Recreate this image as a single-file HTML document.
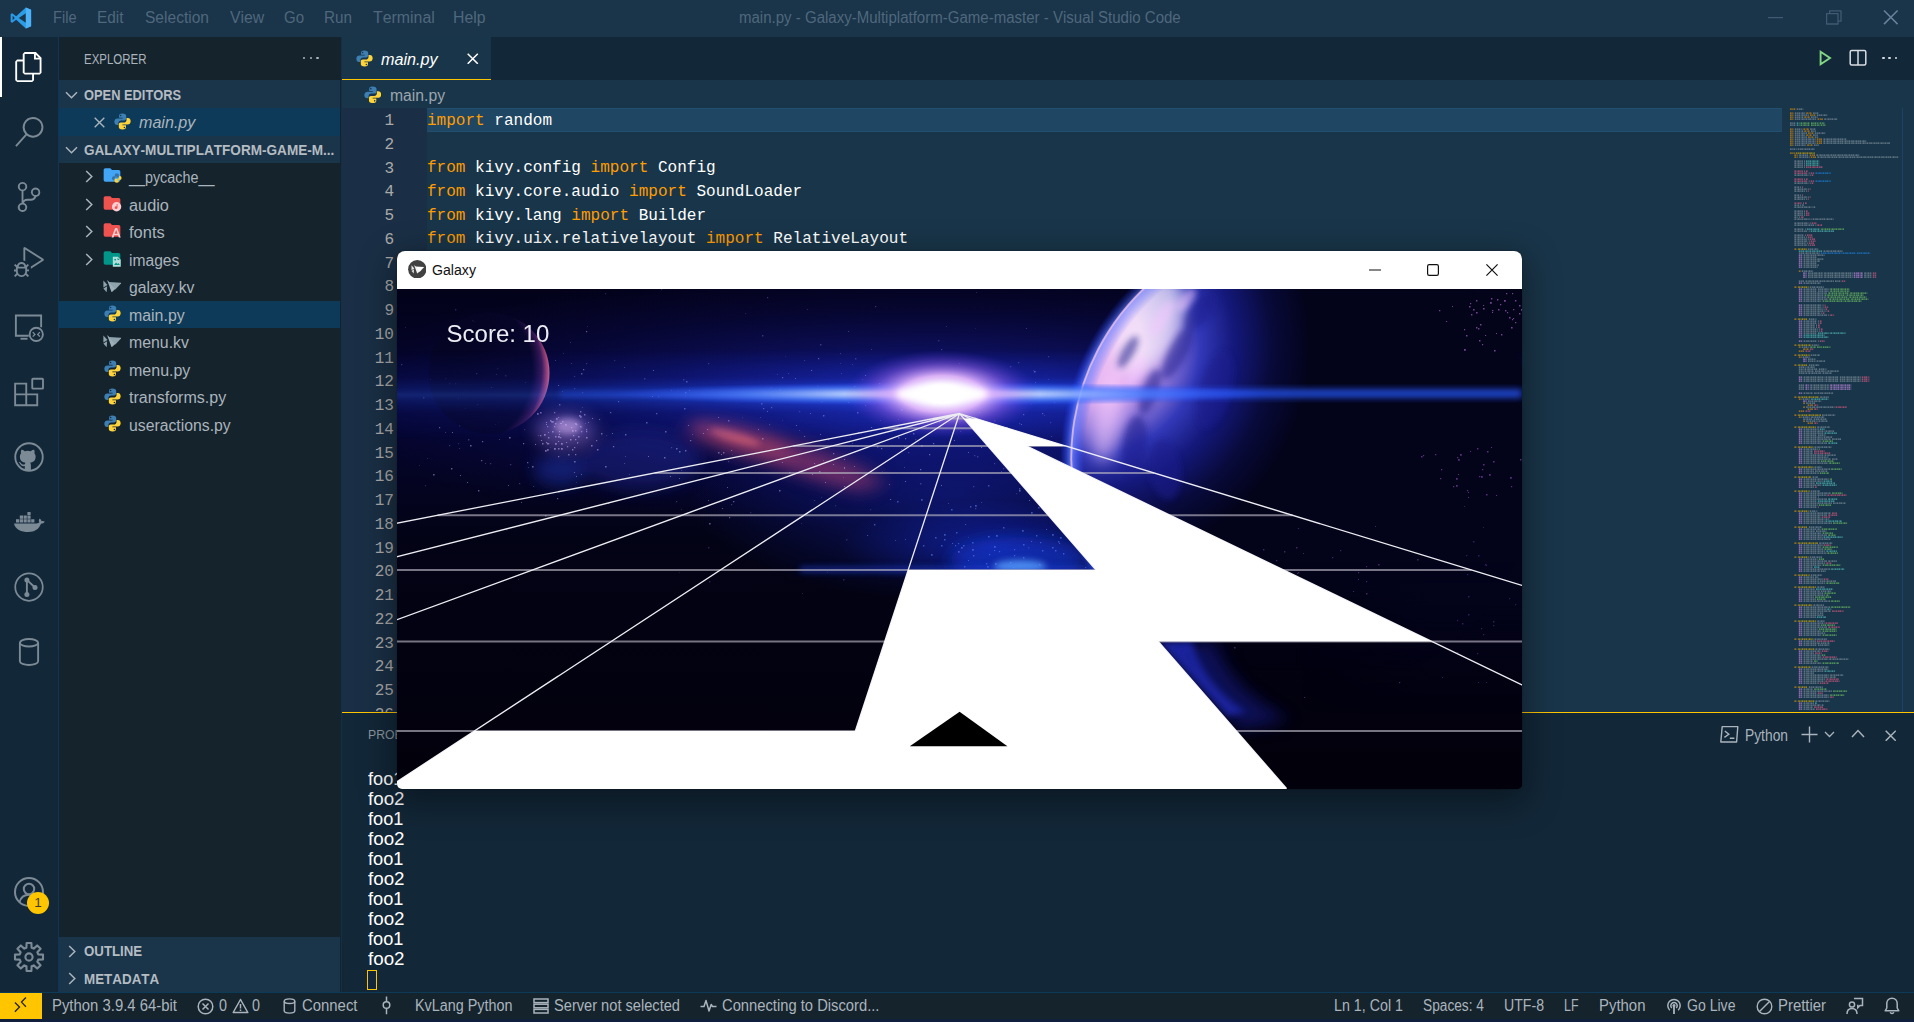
<!DOCTYPE html><html><head><meta charset="utf-8"><title>main.py - Galaxy-Multiplatform-Game-master - Visual Studio Code</title><style>
.tx{position:absolute;white-space:nowrap;transform-origin:0 50%;font-kerning:none;display:block}
*{box-sizing:border-box;margin:0;padding:0}
html,body{width:1914px;height:1022px;overflow:hidden;background:#193549}
body{position:relative;font-family:"Liberation Sans",sans-serif;color:#fff;font-size:16px}
.abs{position:absolute}
#titlebar{left:0;top:0;width:1914px;height:37px;background:#1a344a}
#activity{left:0;top:37px;width:59px;height:955px;background:#122738;border-right:1px solid #0e3655}
#sidebar{left:59px;top:37px;width:281.700px;height:955px;background:#15232d}
#sbborder{left:340.700px;top:37px;width:1.300px;height:955px;background:#143049}
#tabs{left:342px;top:37px;width:1572px;height:43px;background:#122738}
#tab{left:342px;top:37px;width:149px;height:43px;background:#193549;border-bottom:1.300px solid #ffc600}
#crumbs{left:342px;top:80px;width:1572px;height:28px;background:#193549}
#editor{left:342px;top:108px;width:1572px;height:604px;background:#193549;overflow:hidden}
#gutter{left:0;top:0;width:85px;height:604px;background:#1a2f45}
#panel{left:342px;top:712px;width:1572px;height:280px;background:#122738;border-top:1.400px solid #ffc600}
#status{left:0;top:992px;width:1914px;height:30px;background:#15232d;border-top:1px solid #0d3a58;color:#aab2b9;font-size:16.4px}
.st{position:absolute;top:0;height:28px;line-height:26px;white-space:nowrap}
.code{font-family:"Liberation Mono",monospace;font-size:16.04px;white-space:pre;position:absolute;left:85px;margin-top:.700px;height:24px;line-height:24px;color:#fff}
.ln{font-family:"Liberation Mono",monospace;font-size:16.04px;position:absolute;left:0;width:52px;margin-top:1.200px;text-align:right;height:24px;line-height:24px;color:#aaa}
.k{color:#ff9d00}
.row{position:absolute;left:0;width:281px;height:27.5px;line-height:26px;font-size:16.4px;color:#aab4bc;white-space:nowrap}
.hdr{position:absolute;left:0;width:281px;height:27.5px;line-height:27px;font-size:13.8px;font-weight:bold;color:#aeb8c0;background:#1a344a;white-space:nowrap}
</style></head><body>
<div id="titlebar" class="abs"><svg class="abs" style="left:10px;top:7px" width="22" height="22" viewBox="0 0 100 100"><path d="M72 2 L96 13 V87 L72 98 L28 58 L10 72 L3 68 V32 L10 28 L28 42 Z M72 28 L40 50 L72 72 Z M12 40 V60 L22 50 Z" fill="#2b9be6" fill-rule="evenodd"/><path d="M72 2 L96 13 V87 L72 98 Z" fill="#4db2f7"/></svg><span class="tx" style="left:53px;top:6.4px;height:24px;line-height:24px;font-size:15.8px;color:#4f687c;transform:scaleX(0.9230);">File</span><span class="tx" style="left:97px;top:6.4px;height:24px;line-height:24px;font-size:15.8px;color:#4f687c;transform:scaleX(0.9733);">Edit</span><span class="tx" style="left:144.5px;top:6.4px;height:24px;line-height:24px;font-size:15.8px;color:#4f687c;transform:scaleX(0.9846);">Selection</span><span class="tx" style="left:229.5px;top:6.4px;height:24px;line-height:24px;font-size:15.8px;color:#4f687c;transform:scaleX(1.0011);">View</span><span class="tx" style="left:283.5px;top:6.4px;height:24px;line-height:24px;font-size:15.8px;color:#4f687c;transform:scaleX(0.9489);">Go</span><span class="tx" style="left:324px;top:6.4px;height:24px;line-height:24px;font-size:15.8px;color:#4f687c;transform:scaleX(0.9660);">Run</span><span class="tx" style="left:372.5px;top:6.4px;height:24px;line-height:24px;font-size:15.8px;color:#4f687c;transform:scaleX(1.0049);">Terminal</span><span class="tx" style="left:452.5px;top:6.4px;height:24px;line-height:24px;font-size:15.8px;color:#4f687c;transform:scaleX(1.0001);">Help</span><span class="tx" style="left:738.5px;top:5.6px;height:24px;line-height:24px;font-size:15.8px;color:#4f687c;transform:scaleX(0.9511);">main.py - Galaxy-Multiplatform-Game-master - Visual Studio Code</span><svg class="abs" style="left:1760px;top:6px" width="150" height="24" viewBox="1760 6 150 24"><g fill="none" stroke-width="1.300"><path d="M1768 17.600h15" stroke="#3f5a72"/><path d="M1826.600 13.600h11.400v10.400h-11.400zM1829.600 13.600v-2.800h11.400v10.400h-3" stroke="#3f5a72" stroke-linejoin="round"/><path d="M1884 10.500l13.600 13.600M1897.600 10.500L1884 24.100" stroke="#67829a" stroke-width="1.500"/></g></svg></div>
<div id="activity" class="abs"><div class="abs" style="left:0;top:0;width:2px;height:60px;background:#fff"></div><svg class="abs" style="left:14px;top:15px" width="30" height="30" viewBox="0 0 24 24" ><path fill="#fff" d="M17.5 0h-9L7 1.5V6H2.5L1 7.5v15.07L2.5 24h12.07L16 22.57V18h4.7l1.3-1.43V4.5L17.5 0zm0 2.12l2.38 2.38H17.5V2.12zm-3 20.38h-12v-15H7v9.07L8.5 18h6v4.5zm6-6h-12v-15H16V6h4.5v10.5z"/></svg><svg class="abs" style="left:14px;top:80px" width="30" height="30" viewBox="0 0 24 24" ><path fill="#7c8a96" d="M15.25 0a8.25 8.25 0 0 0-6.18 13.72L1 22.88l1.12 1 8.05-9.12A8.251 8.251 0 1 0 15.25.01V0zm0 15a6.75 6.75 0 1 1 0-13.5 6.75 6.75 0 0 1 0 13.5z"/></svg><svg class="abs" style="left:14px;top:145px" width="30" height="30" viewBox="0 0 24 24" ><path fill="#7c8a96" d="M21.007 8.222A3.738 3.738 0 0 0 15.045 5.2a3.737 3.737 0 0 0 1.156 6.583 2.988 2.988 0 0 1-2.668 1.67h-2.99a4.456 4.456 0 0 0-2.989 1.165V7.4a3.737 3.737 0 1 0-1.494 0v9.117a3.776 3.776 0 1 0 1.816.099 2.99 2.99 0 0 1 2.668-1.667h2.99a4.484 4.484 0 0 0 4.223-3.039 3.736 3.736 0 0 0 3.25-3.687zM4.565 3.738a2.242 2.242 0 1 1 4.484 0 2.242 2.242 0 0 1-4.484 0zm4.484 16.441a2.242 2.242 0 1 1-4.484 0 2.242 2.242 0 0 1 4.484 0zm8.221-9.715a2.242 2.242 0 1 1 0-4.485 2.242 2.242 0 0 1 0 4.485z"/></svg><svg class="abs" style="left:14px;top:210px" width="30" height="30" viewBox="0 0 24 24" ><path fill="#7c8a96" d="M10.94 13.5l-1.32 1.32a3.73 3.73 0 0 0-7.24 0L1.06 13.5 0 14.56l1.72 1.72-.22.22V18H0v1.5h1.5v.08c.077.489.214.966.41 1.42L0 22.94 1.06 24l1.65-1.65A4.308 4.308 0 0 0 6 24a4.31 4.31 0 0 0 3.29-1.65L10.94 24 12 22.94 10.09 21c.198-.464.336-.951.41-1.45v-.1H12V18h-1.5v-1.5l-.22-.22L12 14.56l-1.06-1.06zM6 13.5a2.25 2.25 0 0 1 2.25 2.25h-4.5A2.25 2.25 0 0 1 6 13.5zm3 6a3.33 3.33 0 0 1-3 3 3.33 3.33 0 0 1-3-3v-2.25h6v2.25zm14.76-9.9v1.26L13.5 17.37V15.6l8.5-5.37L9 2v9.46a5.07 5.07 0 0 0-1.5-.72V.63L8.64 0l15.12 9.6z"/></svg><svg class="abs" style="left:14px;top:275px" width="30" height="30" viewBox="0 0 24 24" ><g fill="none" stroke="#7c8a96" stroke-width="1.5"><path d="M11.800 19H1.500V2.800h20.200v9.400"/><path d="M5.200 21.400h5.600"/><circle cx="17.800" cy="17.900" r="5.300"/><path d="M15 16.100l1.700 1.800-1.700 1.800M20.700 16.100l-1.700 1.800 1.700 1.800" stroke-width="1.150"/></g></svg><svg class="abs" style="left:14px;top:340px" width="30" height="30" viewBox="0 0 24 24" ><g fill="none" stroke="#7c8a96" stroke-width="1.5"><path d="M0.900 5.300h8.900v8.600h8.800v8.700H0.900zM0.900 13.900h8.900v8.700"/><rect x="14.600" y="1.400" width="8.600" height="7.900" rx="0.600"/></g></svg><svg class="abs" style="left:14px;top:405px" width="30" height="30" viewBox="0 0 24 24" ><circle cx="12" cy="12" r="11" fill="none" stroke="#7c8a96" stroke-width="1.5"/><path fill="#7c8a96" d="M8.6 22.3v-3.1c-2.6.6-3.4-1.2-3.4-1.2-.5-1.1-1.1-1.4-1.1-1.4-.9-.6.1-.6.1-.6 1 .1 1.5 1 1.5 1 .9 1.5 2.3 1.1 2.9.8.1-.6.3-1.1.6-1.3-2.2-.2-4.500-1.100-4.500-4.900 0-1.100.400-2 1-2.700-.1-.2-.4-1.200.1-2.600 0 0 .8-.3 2.700 1a9.400 9.400 0 0 1 5 0c1.900-1.300 2.700-1 2.700-1 .5 1.400.2 2.400.1 2.600.6.700 1 1.600 1 2.700 0 3.800-2.300 4.700-4.500 4.900.4.300.7.900.7 1.800v4z"/></svg><svg class="abs" style="left:13px;top:473px" width="32" height="30" viewBox="0 0 32 30" ><g fill="#7c8a96"><path d="M1 13.5h22.500c1.200 0 2.300-.5 2.900-1.200-.8-1.100-.8-2.900.3-3.900 1.100.9 1.700 1.800 1.800 2.800 1.100-.4 2.300-.2 3.200.4-.6 1.500-2 2.200-3.700 2.200-1.900 5.200-6.300 8.200-12.500 8.200-7.200 0-13.500-2.500-14.500-8.500z"/><path d="M3 9.300h3.200v3.200H3zM6.800 9.300H10v3.200H6.800zM10.600 9.300h3.200v3.200h-3.200zM14.400 9.300h3.200v3.200h-3.200zM18.200 9.300h3.200v3.200h-3.200zM6.800 5.600H10v3.200H6.800zM10.600 5.600h3.200v3.200h-3.200zM14.400 5.600h3.200v3.200h-3.200zM14.400 1.900h3.200v3.200h-3.200z"/></g></svg><svg class="abs" style="left:14px;top:535px" width="30" height="30" viewBox="0 0 24 24" ><circle cx="12" cy="12" r="11" fill="none" stroke="#7c8a96" stroke-width="1.4"/><g fill="#7c8a96"><circle cx="10.3" cy="6.300" r="2"/><circle cx="10.3" cy="18" r="2"/><circle cx="16.8" cy="12.400" r="2"/></g><path d="M10.3 6.300V18M10.3 6.300l6.500 6.100" stroke="#7c8a96" stroke-width="1.5" fill="none"/></svg><svg class="abs" style="left:14px;top:600px" width="30" height="30" viewBox="0 0 24 24" ><g fill="none" stroke="#7c8a96" stroke-width="1.5"><ellipse cx="12" cy="4.600" rx="7.300" ry="3"/><path d="M4.700 4.600v14.800c0 1.700 3.300 3 7.300 3s7.300-1.300 7.300-3V4.600"/></g></svg><svg class="abs" style="left:13px;top:839px" width="32" height="32" viewBox="0 0 32 32" ><g fill="none" stroke="#7c8a96" stroke-width="2"><circle cx="16" cy="16" r="14"/><circle cx="16" cy="13" r="5.200"/><path d="M6.500 26.200c1.200-4.800 5-7.500 9.500-7.500s8.300 2.700 9.500 7.500"/></g></svg><div class="abs" style="left:27px;top:855px;width:22px;height:22px;border-radius:11px;background:#ffc600;color:#3a3a2a;font-size:13.5px;line-height:22px;text-align:center">1</div><svg class="abs" style="left:13px;top:904px" width="32" height="32" viewBox="0 0 32 32" ><path d="M13.41 6.75L13.60 2.00L18.40 2.00L18.59 6.75L20.71 7.63L24.20 4.41L27.59 7.80L24.37 11.29L25.25 13.41L30.00 13.60L30.00 18.40L25.25 18.59L24.37 20.71L27.59 24.20L24.20 27.59L20.71 24.37L18.59 25.25L18.40 30.00L13.60 30.00L13.41 25.25L11.29 24.37L7.80 27.59L4.41 24.20L7.63 20.71L6.75 18.59L2.00 18.40L2.00 13.60L6.75 13.41L7.63 11.29L4.41 7.80L7.80 4.41L11.29 7.63Z" fill="none" stroke="#7c8a96" stroke-width="2.1" stroke-linejoin="round"/><circle cx="16" cy="16" r="3.600" fill="none" stroke="#7c8a96" stroke-width="2.1"/></svg></div>
<div id="sidebar" class="abs"></div><div id="sbborder" class="abs"></div><span class="tx" style="left:84.3px;top:48.8px;height:21px;line-height:21px;font-size:14px;color:#aab4bc;transform:scaleX(0.8197);">EXPLORER</span><div class="abs" style="left:303px;top:57px;width:17px;height:4px"><i class="abs" style="left:0.0px;top:0;width:2.400px;height:2.400px;background:#aab4bc;border-radius:1px"></i><i class="abs" style="left:6.6px;top:0;width:2.400px;height:2.400px;background:#aab4bc;border-radius:1px"></i><i class="abs" style="left:13.2px;top:0;width:2.400px;height:2.400px;background:#aab4bc;border-radius:1px"></i></div><div class="abs" style="left:59px;top:79.600px;width:281px;height:28.400px;background:#1a344a"></div><svg class="abs" style="left:65px;top:91px" width="13" height="8" viewBox="0 0 13 8" ><path d="M1 1.200l5.500 5.600L12 1.200" fill="none" stroke="#aab4bc" stroke-width="1.500"/></svg><span class="tx" style="left:84.3px;top:84.7px;height:21px;line-height:21px;font-size:13.8px;color:#b4bcc2;font-weight:bold;transform:scaleX(0.9314);">OPEN EDITORS</span><div class="abs" style="left:59px;top:108px;width:281px;height:27.500px;background:#0d3a58"></div><svg class="abs" style="left:93.5px;top:117px" width="11" height="11" viewBox="0 0 11 11" ><path d="M0.700 0.700L10.3 10.3M10.3 0.700L0.700 10.3" stroke="#aab4bc" stroke-width="1.4" fill="none"/></svg><svg class="abs" style="left:113.5px;top:112.5px" width="17" height="17" viewBox="0.4 0.4 15.2 15.2" ><path d="M7.9 0.800C5.300 0.800 4.900 1.900 4.900 3V4.700H8.100V5.300H3.500C1.800 5.300 0.700 6.400 0.700 8.200C0.700 10 1.700 11.100 3.200 11.100H4.400V9.300C4.400 7.900 5.400 7 6.800 7H9.600C10.600 7 11.300 6.300 11.300 5.300V3C11.300 1.700 10.300 0.800 7.900 0.800Z" fill="#3d7eb3"/><circle cx="6.300" cy="2.700" r="0.700" fill="#0d3a58"/><g transform="rotate(180 8 8)"><path d="M7.9 0.800C5.300 0.800 4.900 1.900 4.900 3V4.700H8.100V5.300H3.500C1.800 5.300 0.700 6.400 0.700 8.200C0.700 10 1.700 11.100 3.200 11.100H4.400V9.300C4.400 7.900 5.400 7 6.800 7H9.600C10.600 7 11.300 6.300 11.300 5.300V3C11.300 1.700 10.300 0.800 7.900 0.800Z" fill="#ffd43b"/><circle cx="6.300" cy="2.700" r="0.700" fill="#0d3a58"/></g></svg><span class="tx" style="left:139.4px;top:111.3px;height:23px;line-height:23px;font-size:15.6px;color:#aab4bc;font-style:italic;transform:scaleX(1.0325);">main.py</span><div class="abs" style="left:59px;top:135.500px;width:281px;height:27.500px;background:#1a344a"></div><svg class="abs" style="left:65px;top:146px" width="13" height="8" viewBox="0 0 13 8" ><path d="M1 1.200l5.500 5.600L12 1.200" fill="none" stroke="#aab4bc" stroke-width="1.500"/></svg><span class="tx" style="left:84.3px;top:140.1px;height:21px;line-height:21px;font-size:13.8px;color:#b4bcc2;font-weight:bold;transform:scaleX(0.9841);">GALAXY-MULTIPLATFORM-GAME-M...</span><svg class="abs" style="left:85px;top:170.1px" width="8" height="13" viewBox="0 0 8 13" ><path d="M1.200 1l5.600 5.500L1.200 12" fill="none" stroke="#aab4bc" stroke-width="1.500"/></svg><svg class="abs" style="left:101.6px;top:165.29999999999998px" width="20" height="20" viewBox="0 0 24 24" ><path d="M10 4H4c-1.110 0-2 .890-2 2v12a2 2 0 0 0 2 2h16a2 2 0 0 0 2-2V8c0-1.110-.900-2-2-2h-8l-2-2z" fill="#42a5f5"/><g transform="translate(11.500 9.500) scale(0.780)"><path d="M7.9 0.800C5.300 0.800 4.900 1.900 4.900 3V4.700H8.100V5.300H3.500C1.800 5.300 0.700 6.400 0.700 8.200C0.700 10 1.700 11.100 3.200 11.100H4.400V9.300C4.400 7.900 5.400 7 6.800 7H9.600C10.600 7 11.300 6.300 11.300 5.300V3C11.300 1.700 10.300 0.800 7.900 0.800Z" fill="#3572a5"/><g transform="rotate(180 8 8)"><path d="M7.9 0.800C5.300 0.800 4.900 1.900 4.900 3V4.700H8.100V5.300H3.500C1.800 5.300 0.700 6.400 0.700 8.200C0.700 10 1.700 11.100 3.200 11.100H4.400V9.300C4.400 7.900 5.400 7 6.800 7H9.600C10.600 7 11.300 6.300 11.300 5.300V3C11.300 1.700 10.300 0.800 7.900 0.800Z" fill="#ffd43b"/></g></g></svg><span class="tx" style="left:129.4px;top:166.1px;height:23px;line-height:23px;font-size:15.6px;color:#aab4bc;transform:scaleX(0.9202);">__pycache__</span><svg class="abs" style="left:85px;top:197.6px" width="8" height="13" viewBox="0 0 8 13" ><path d="M1.200 1l5.600 5.500L1.200 12" fill="none" stroke="#aab4bc" stroke-width="1.500"/></svg><svg class="abs" style="left:101.6px;top:192.79999999999998px" width="20" height="20" viewBox="0 0 24 24" ><path d="M10 4H4c-1.110 0-2 .890-2 2v12a2 2 0 0 0 2 2h16a2 2 0 0 0 2-2V8c0-1.110-.900-2-2-2h-8l-2-2z" fill="#ef5350"/><circle cx="17.500" cy="16.500" r="5.600" fill="#ffcdd2"/><path d="M18.600 13.300v4.200a1.700 1.700 0 1 1-1-1.500v-2.700z" fill="#ef5350"/></svg><span class="tx" style="left:129.4px;top:193.6px;height:23px;line-height:23px;font-size:15.6px;color:#aab4bc;transform:scaleX(1.0453);">audio</span><svg class="abs" style="left:85px;top:225.1px" width="8" height="13" viewBox="0 0 8 13" ><path d="M1.200 1l5.600 5.500L1.200 12" fill="none" stroke="#aab4bc" stroke-width="1.500"/></svg><svg class="abs" style="left:101.6px;top:220.29999999999998px" width="20" height="20" viewBox="0 0 24 24" ><path d="M10 4H4c-1.110 0-2 .890-2 2v12a2 2 0 0 0 2 2h16a2 2 0 0 0 2-2V8c0-1.110-.900-2-2-2h-8l-2-2z" fill="#ef5350"/><path d="M15.800 9.500h2.400l4.300 11.500h-2.300l-.900-2.600h-4.600l-.900 2.600h-2.300zM15.300 16.600h3.400l-1.700-4.900z" fill="#ffcdd2"/></svg><span class="tx" style="left:129.4px;top:221.1px;height:23px;line-height:23px;font-size:15.6px;color:#aab4bc;transform:scaleX(1.0556);">fonts</span><svg class="abs" style="left:85px;top:252.60000000000002px" width="8" height="13" viewBox="0 0 8 13" ><path d="M1.200 1l5.600 5.500L1.200 12" fill="none" stroke="#aab4bc" stroke-width="1.500"/></svg><svg class="abs" style="left:101.6px;top:247.8px" width="20" height="20" viewBox="0 0 24 24" ><path d="M10 4H4c-1.110 0-2 .890-2 2v12a2 2 0 0 0 2 2h16a2 2 0 0 0 2-2V8c0-1.110-.900-2-2-2h-8l-2-2z" fill="#009688"/><path d="M13 10.500h6l3.500 3.500v8.500H13z" fill="#b2dfdb"/><path d="M14.500 20.500l2.300-3.200 1.600 2 1.200-1.400 1.900 2.600zM18.700 11.800v2.600h2.600z" fill="#009688"/><circle cx="15.800" cy="14" r="1" fill="#009688"/></svg><span class="tx" style="left:129.4px;top:248.6px;height:23px;line-height:23px;font-size:15.6px;color:#aab4bc;transform:scaleX(1.0022);">images</span><svg class="abs" style="left:102.6px;top:279.6px" width="18.5" height="12.3" viewBox="0 0 18.5 12.3" ><polygon points="0.4,0.4 4.5,5 0.4,7.4" fill="#8fa3ad"/><polygon points="0.4,8.6 3.7,12.3 4.1,6.2" fill="#8fa3ad"/><polygon points="4.1,0 8.6,12.3 13.2,8.2" fill="#9db0b9"/><polygon points="5.8,2.1 18.5,2.9 12.3,9.5" fill="#8fa3ad"/></svg><span class="tx" style="left:129.4px;top:276.1px;height:23px;line-height:23px;font-size:15.6px;color:#aab4bc;transform:scaleX(1.0067);">galaxy.kv</span><div class="abs" style="left:59px;top:300.5px;width:281px;height:27.500px;background:#0d3a58"></div><svg class="abs" style="left:104px;top:305.1px" width="17" height="17" viewBox="0.4 0.4 15.2 15.2" ><path d="M7.9 0.800C5.300 0.800 4.900 1.900 4.900 3V4.700H8.100V5.300H3.500C1.800 5.300 0.700 6.400 0.700 8.200C0.700 10 1.700 11.100 3.200 11.100H4.400V9.300C4.400 7.900 5.400 7 6.800 7H9.600C10.600 7 11.300 6.300 11.300 5.300V3C11.300 1.700 10.300 0.800 7.900 0.800Z" fill="#3d7eb3"/><circle cx="6.300" cy="2.700" r="0.700" fill="#0d3a58"/><g transform="rotate(180 8 8)"><path d="M7.9 0.800C5.300 0.800 4.900 1.900 4.900 3V4.700H8.100V5.300H3.500C1.800 5.300 0.700 6.400 0.700 8.200C0.700 10 1.700 11.100 3.200 11.100H4.400V9.300C4.400 7.900 5.400 7 6.800 7H9.600C10.600 7 11.300 6.300 11.300 5.300V3C11.300 1.700 10.300 0.800 7.900 0.800Z" fill="#ffd43b"/><circle cx="6.300" cy="2.700" r="0.700" fill="#0d3a58"/></g></svg><span class="tx" style="left:129.4px;top:303.6px;height:23px;line-height:23px;font-size:15.6px;color:#aab4bc;transform:scaleX(1.0197);">main.py</span><svg class="abs" style="left:102.6px;top:334.6px" width="18.5" height="12.3" viewBox="0 0 18.5 12.3" ><polygon points="0.4,0.4 4.5,5 0.4,7.4" fill="#8fa3ad"/><polygon points="0.4,8.6 3.7,12.3 4.1,6.2" fill="#8fa3ad"/><polygon points="4.1,0 8.6,12.3 13.2,8.2" fill="#9db0b9"/><polygon points="5.8,2.1 18.5,2.9 12.3,9.5" fill="#8fa3ad"/></svg><span class="tx" style="left:129.4px;top:331.1px;height:23px;line-height:23px;font-size:15.6px;color:#aab4bc;transform:scaleX(1.0160);">menu.kv</span><svg class="abs" style="left:104px;top:360.1px" width="17" height="17" viewBox="0.4 0.4 15.2 15.2" ><path d="M7.9 0.800C5.300 0.800 4.900 1.900 4.900 3V4.700H8.100V5.300H3.500C1.800 5.300 0.700 6.400 0.700 8.200C0.700 10 1.700 11.100 3.200 11.100H4.400V9.300C4.400 7.900 5.400 7 6.800 7H9.600C10.600 7 11.300 6.300 11.300 5.300V3C11.300 1.700 10.300 0.800 7.900 0.800Z" fill="#3d7eb3"/><circle cx="6.300" cy="2.700" r="0.700" fill="#15232d"/><g transform="rotate(180 8 8)"><path d="M7.9 0.800C5.300 0.800 4.900 1.900 4.900 3V4.700H8.100V5.300H3.500C1.800 5.300 0.700 6.400 0.700 8.200C0.700 10 1.700 11.100 3.200 11.100H4.400V9.300C4.400 7.900 5.400 7 6.800 7H9.600C10.600 7 11.300 6.300 11.300 5.300V3C11.300 1.700 10.300 0.800 7.900 0.800Z" fill="#ffd43b"/><circle cx="6.300" cy="2.700" r="0.700" fill="#15232d"/></g></svg><span class="tx" style="left:129.4px;top:358.6px;height:23px;line-height:23px;font-size:15.6px;color:#aab4bc;transform:scaleX(1.0262);">menu.py</span><svg class="abs" style="left:104px;top:387.6px" width="17" height="17" viewBox="0.4 0.4 15.2 15.2" ><path d="M7.9 0.800C5.300 0.800 4.900 1.900 4.900 3V4.700H8.100V5.300H3.500C1.800 5.300 0.700 6.400 0.700 8.200C0.700 10 1.700 11.100 3.200 11.100H4.400V9.300C4.400 7.900 5.400 7 6.800 7H9.600C10.600 7 11.300 6.300 11.300 5.300V3C11.300 1.700 10.300 0.800 7.900 0.800Z" fill="#3d7eb3"/><circle cx="6.300" cy="2.700" r="0.700" fill="#15232d"/><g transform="rotate(180 8 8)"><path d="M7.9 0.800C5.300 0.800 4.900 1.900 4.900 3V4.700H8.100V5.300H3.500C1.800 5.300 0.700 6.400 0.700 8.200C0.700 10 1.700 11.100 3.200 11.100H4.400V9.300C4.400 7.900 5.400 7 6.800 7H9.600C10.600 7 11.300 6.300 11.300 5.300V3C11.300 1.700 10.300 0.800 7.900 0.800Z" fill="#ffd43b"/><circle cx="6.300" cy="2.700" r="0.700" fill="#15232d"/></g></svg><span class="tx" style="left:129.4px;top:386.1px;height:23px;line-height:23px;font-size:15.6px;color:#aab4bc;transform:scaleX(1.0297);">transforms.py</span><svg class="abs" style="left:104px;top:415.1px" width="17" height="17" viewBox="0.4 0.4 15.2 15.2" ><path d="M7.9 0.800C5.300 0.800 4.900 1.900 4.900 3V4.700H8.100V5.300H3.500C1.800 5.300 0.700 6.400 0.700 8.200C0.700 10 1.700 11.100 3.200 11.100H4.400V9.300C4.400 7.900 5.400 7 6.800 7H9.600C10.600 7 11.300 6.300 11.300 5.300V3C11.300 1.700 10.300 0.800 7.900 0.800Z" fill="#3d7eb3"/><circle cx="6.300" cy="2.700" r="0.700" fill="#15232d"/><g transform="rotate(180 8 8)"><path d="M7.9 0.800C5.300 0.800 4.900 1.900 4.900 3V4.700H8.100V5.300H3.500C1.800 5.300 0.700 6.400 0.700 8.200C0.700 10 1.700 11.100 3.200 11.100H4.400V9.300C4.400 7.900 5.400 7 6.800 7H9.600C10.600 7 11.300 6.300 11.300 5.300V3C11.300 1.700 10.300 0.800 7.900 0.800Z" fill="#ffd43b"/><circle cx="6.300" cy="2.700" r="0.700" fill="#15232d"/></g></svg><span class="tx" style="left:129.4px;top:413.6px;height:23px;line-height:23px;font-size:15.6px;color:#aab4bc;transform:scaleX(1.0111);">useractions.py</span><div class="abs" style="left:59px;top:937px;width:281px;height:27.500px;background:#1a344a"></div><svg class="abs" style="left:68px;top:944.5px" width="8" height="13" viewBox="0 0 8 13" ><path d="M1.200 1l5.600 5.500L1.200 12" fill="none" stroke="#aab4bc" stroke-width="1.500"/></svg><span class="tx" style="left:84.3px;top:941.1px;height:21px;line-height:21px;font-size:13.8px;color:#b4bcc2;font-weight:bold;transform:scaleX(0.9610);">OUTLINE</span><div class="abs" style="left:59px;top:964.5px;width:281px;height:27.500px;background:#1a344a"></div><svg class="abs" style="left:68px;top:972.0px" width="8" height="13" viewBox="0 0 8 13" ><path d="M1.200 1l5.600 5.500L1.200 12" fill="none" stroke="#aab4bc" stroke-width="1.500"/></svg><span class="tx" style="left:84.3px;top:968.6px;height:21px;line-height:21px;font-size:13.8px;color:#b4bcc2;font-weight:bold;transform:scaleX(0.9711);">METADATA</span>
<div id="tabs" class="abs"></div><div id="tab" class="abs"></div><div id="crumbs" class="abs"></div><svg class="abs" style="left:355.5px;top:49.5px" width="17" height="17" viewBox="0.4 0.4 15.2 15.2" ><path d="M7.9 0.800C5.300 0.800 4.900 1.900 4.900 3V4.700H8.100V5.300H3.500C1.800 5.300 0.700 6.400 0.700 8.200C0.700 10 1.700 11.100 3.200 11.100H4.400V9.300C4.400 7.900 5.400 7 6.800 7H9.600C10.600 7 11.300 6.300 11.300 5.300V3C11.300 1.700 10.300 0.800 7.900 0.800Z" fill="#3d7eb3"/><circle cx="6.300" cy="2.700" r="0.700" fill="#193549"/><g transform="rotate(180 8 8)"><path d="M7.9 0.800C5.300 0.800 4.900 1.900 4.900 3V4.700H8.100V5.300H3.500C1.800 5.300 0.700 6.400 0.700 8.200C0.700 10 1.700 11.100 3.200 11.100H4.400V9.300C4.400 7.900 5.400 7 6.800 7H9.600C10.600 7 11.300 6.300 11.300 5.300V3C11.300 1.700 10.300 0.800 7.900 0.800Z" fill="#ffd43b"/><circle cx="6.300" cy="2.700" r="0.700" fill="#193549"/></g></svg><span class="tx" style="left:381.4px;top:48.3px;height:24px;line-height:24px;font-size:16px;color:#ffffff;font-style:italic;transform:scaleX(1.0121);">main.py</span><svg class="abs" style="left:467px;top:52.5px" width="11.5" height="11.5" viewBox="0 0 11.5 11.5" ><path d="M0.700 0.700L10.8 10.8M10.8 0.700L0.700 10.8" stroke="#ffffff" stroke-width="1.5" fill="none"/></svg><svg class="abs" style="left:1817px;top:50px" width="16" height="16" viewBox="0 0 16 16" ><path d="M3.600 1.800L13 8L3.600 14.200Z" fill="none" stroke="#84d884" stroke-width="1.900" stroke-linejoin="miter"/></svg><svg class="abs" style="left:1849px;top:49px" width="18" height="18" viewBox="0 0 18 18" ><rect x="1.200" y="1.500" width="15.600" height="14.500" rx="1.500" fill="none" stroke="#d7dde2" stroke-width="1.500"/><path d="M9 1.500V16" stroke="#d7dde2" stroke-width="1.500"/></svg><div class="abs" style="left:1882px;top:56.500px;width:17px;height:4px"><i class="abs" style="left:0.0px;top:0;width:2.600px;height:2.600px;background:#d7dde2;border-radius:1px"></i><i class="abs" style="left:6.4px;top:0;width:2.600px;height:2.600px;background:#d7dde2;border-radius:1px"></i><i class="abs" style="left:12.8px;top:0;width:2.600px;height:2.600px;background:#d7dde2;border-radius:1px"></i></div><svg class="abs" style="left:363.5px;top:85.5px" width="17.5" height="17.5" viewBox="0.4 0.4 15.2 15.2" ><path d="M7.9 0.800C5.300 0.800 4.900 1.900 4.900 3V4.700H8.100V5.300H3.500C1.800 5.300 0.700 6.400 0.700 8.200C0.700 10 1.700 11.100 3.200 11.100H4.400V9.300C4.400 7.900 5.400 7 6.800 7H9.600C10.600 7 11.300 6.300 11.300 5.300V3C11.300 1.700 10.300 0.800 7.900 0.800Z" fill="#3d7eb3"/><circle cx="6.300" cy="2.700" r="0.700" fill="#193549"/><g transform="rotate(180 8 8)"><path d="M7.9 0.800C5.300 0.800 4.900 1.900 4.900 3V4.700H8.100V5.300H3.500C1.800 5.300 0.700 6.400 0.700 8.200C0.700 10 1.700 11.100 3.200 11.100H4.400V9.300C4.400 7.900 5.400 7 6.800 7H9.600C10.600 7 11.300 6.300 11.300 5.300V3C11.300 1.700 10.300 0.800 7.900 0.800Z" fill="#ffd43b"/><circle cx="6.300" cy="2.700" r="0.700" fill="#193549"/></g></svg><span class="tx" style="left:389.6px;top:83.7px;height:23px;line-height:23px;font-size:15.6px;color:#9ba6ae;transform:scaleX(1.0087);">main.py</span>
<div id="editor" class="abs"><div id="gutter" class="abs"></div><div class="abs" style="left:85px;top:0;width:1355px;height:24px;background:#1f4662;border-top:1.500px solid #234e6d;border-bottom:1.500px solid #234e6d"></div><div class="ln" style="top:0.00px">1</div><div class="code" style="top:0.00px"><span class="k">import</span> random</div><div class="ln" style="top:23.75px">2</div><div class="ln" style="top:47.50px">3</div><div class="code" style="top:47.50px"><span class="k">from</span> kivy.config <span class="k">import</span> Config</div><div class="ln" style="top:71.25px">4</div><div class="code" style="top:71.25px"><span class="k">from</span> kivy.core.audio <span class="k">import</span> SoundLoader</div><div class="ln" style="top:95.00px">5</div><div class="code" style="top:95.00px"><span class="k">from</span> kivy.lang <span class="k">import</span> Builder</div><div class="ln" style="top:118.75px">6</div><div class="code" style="top:118.75px"><span class="k">from</span> kivy.uix.relativelayout <span class="k">import</span> RelativeLayout</div><div class="ln" style="top:142.50px">7</div><div class="code" style="top:142.50px"><span class="k">from</span> kivy.uix.widget <span class="k">import</span> Widget</div><div class="ln" style="top:166.25px">8</div><div class="ln" style="top:190.00px">9</div><div class="ln" style="top:213.75px">10</div><div class="ln" style="top:237.50px">11</div><div class="ln" style="top:261.25px">12</div><div class="ln" style="top:285.00px">13</div><div class="ln" style="top:308.75px">14</div><div class="ln" style="top:332.50px">15</div><div class="ln" style="top:356.25px">16</div><div class="ln" style="top:380.00px">17</div><div class="ln" style="top:403.75px">18</div><div class="ln" style="top:427.50px">19</div><div class="ln" style="top:451.25px">20</div><div class="ln" style="top:475.00px">21</div><div class="ln" style="top:498.75px">22</div><div class="ln" style="top:522.50px">23</div><div class="ln" style="top:546.25px">24</div><div class="ln" style="top:570.00px">25</div><div class="ln" style="top:593.75px">26</div><svg class="abs" style="left:1438px;top:0" width="134" height="604" viewBox="1780 108 134 604"><path d="M1790.0 109.2h5.7M1790.0 113.2h3.8M1806.2 113.2h5.7M1790.0 115.2h3.8M1810.0 115.2h5.7M1790.0 117.2h3.8M1804.3 117.2h5.7M1790.0 119.2h3.8M1817.6 119.2h5.7M1790.0 129.2h3.8M1803.4 129.2h5.7M1790.0 131.2h3.8M1804.3 131.2h5.7M1790.0 133.2h3.8M1808.1 133.2h5.7M1790.0 135.2h3.8M1806.2 135.2h5.7M1790.0 137.2h3.8M1808.1 137.2h5.7M1790.0 139.2h3.8M1816.7 139.2h5.7M1790.0 141.2h3.8M1816.7 141.2h5.7M1790.0 143.2h3.8M1816.7 143.2h5.7M1790.0 145.2h3.8M1807.2 145.2h5.7M1790.0 153.2h4.8M1794.4 155.2h3.8M1809.7 155.2h5.7M1794.4 157.2h3.8M1810.7 157.2h5.7M1794.4 249.2h2.8M1798.8 271.2h1.9M1794.4 287.2h2.8M1794.4 319.2h2.8M1794.4 345.2h2.8M1798.8 347.2h1.9M1803.2 349.2h5.7M1798.8 351.2h5.7M1794.4 355.2h2.8M1798.8 357.2h2.8M1794.4 365.2h2.8M1794.4 397.2h2.8M1798.8 399.2h2.8M1803.2 403.2h1.9M1807.6 405.2h5.7M1803.2 407.2h1.9M1807.6 409.2h5.7M1798.8 411.2h5.7M1794.4 415.2h2.8M1798.8 417.2h2.8M1803.2 421.2h1.9M1807.6 423.2h5.7M1794.4 427.2h2.8M1794.4 447.2h2.8M1794.4 467.2h2.8M1794.4 477.2h2.8M1794.4 491.2h2.8M1794.4 511.2h2.8M1794.4 527.2h2.8M1794.4 543.2h2.8M1794.4 557.2h2.8M1794.4 575.2h2.8M1794.4 587.2h2.8M1794.4 605.2h2.8M1794.4 621.2h2.8M1794.4 639.2h2.8M1794.4 649.2h2.8M1794.4 667.2h2.8M1794.4 687.2h2.8M1794.4 701.2h2.8" stroke="#ff9d00" stroke-width="1.300" stroke-dasharray="1.700 .600 .900 .400" fill="none" opacity="0.72"/><path d="M1796.7 109.2h6.6M1794.8 113.2h10.4M1813.0 113.2h5.7M1794.8 115.2h14.2M1816.8 115.2h10.4M1794.8 117.2h8.5M1811.0 117.2h6.6M1794.8 119.2h21.8M1824.3 119.2h13.3M1790.0 123.2h5.7M1790.0 125.2h5.7M1794.8 129.2h7.6M1810.1 129.2h5.7M1794.8 131.2h8.5M1811.0 131.2h4.8M1794.8 133.2h12.3M1814.8 133.2h10.4M1794.8 135.2h10.4M1813.0 135.2h4.8M1794.8 137.2h12.3M1814.8 137.2h3.8M1794.8 139.2h20.9M1823.4 139.2h22.8M1794.8 141.2h20.9M1823.4 141.2h42.8M1794.8 143.2h20.9M1823.4 143.2h66.5M1794.8 145.2h11.4M1813.9 145.2h4.8M1790.0 149.2h6.6M1797.7 149.2h17.1M1799.2 155.2h9.5M1816.4 155.2h42.8M1799.2 157.2h10.4M1817.4 157.2h80.8M1794.4 161.2h8.5M1804.0 161.2h0.9M1794.4 163.2h8.5M1804.0 163.2h0.9M1794.4 165.2h8.5M1804.0 165.2h0.9M1794.4 167.2h8.5M1804.0 167.2h0.9M1804.0 171.2h0.9M1808.7 173.2h0.9M1794.4 175.2h14.2M1809.7 175.2h0.9M1804.0 179.2h0.9M1808.7 181.2h0.9M1794.4 183.2h14.2M1809.7 183.2h0.9M1794.4 187.2h4.8M1800.2 187.2h0.9M1794.4 189.2h12.3M1807.8 189.2h0.9M1794.4 191.2h10.4M1805.9 191.2h0.9M1794.4 195.2h4.8M1800.2 195.2h0.9M1794.4 197.2h12.3M1807.8 197.2h0.9M1794.4 199.2h10.4M1805.9 199.2h0.9M1803.0 203.2h0.9M1794.4 205.2h4.8M1800.2 205.2h0.9M1802.1 205.2h1.9M1794.4 207.2h16.1M1811.6 207.2h0.9M1813.5 207.2h1.9M1794.4 211.2h8.5M1804.0 211.2h0.9M1794.4 213.2h8.5M1804.0 213.2h0.9M1794.4 215.2h8.5M1804.0 215.2h0.9M1794.4 217.2h3.8M1799.2 217.2h0.9M1794.4 219.2h15.2M1810.6 219.2h0.9M1812.6 219.2h20.9M1794.4 223.2h14.2M1809.7 223.2h0.9M1794.4 225.2h19.9M1815.4 225.2h0.9M1794.4 229.2h9.5M1804.9 229.2h0.9M1794.4 231.2h13.3M1808.7 231.2h0.9M1794.4 235.2h9.5M1804.9 235.2h0.9M1794.4 237.2h10.4M1805.9 237.2h0.9M1794.4 239.2h12.3M1807.8 239.2h0.9M1794.4 241.2h13.3M1808.7 241.2h0.9M1794.4 243.2h11.4M1806.8 243.2h0.9M1794.4 245.2h12.3M1807.8 245.2h0.9M1807.8 249.2h10.4M1823.5 251.2h19.0M1798.8 253.2h20.9M1803.6 255.2h20.9M1803.6 257.2h13.3M1803.6 259.2h19.9M1803.6 261.2h16.1M1803.6 263.2h13.3M1803.6 265.2h15.2M1803.6 267.2h14.2M1801.7 271.2h11.4M1808.0 273.2h15.2M1824.2 273.2h28.5M1864.2 273.2h7.6M1808.0 275.2h15.2M1824.2 275.2h28.5M1864.2 275.2h7.6M1808.0 277.2h15.2M1824.2 277.2h28.5M1864.2 277.2h7.6M1798.8 281.2h5.7M1805.5 281.2h28.5M1835.0 281.2h5.7M1803.6 283.2h17.1M1809.7 287.2h14.2M1803.6 289.2h13.3M1817.9 289.2h11.4M1803.6 291.2h13.3M1817.9 291.2h11.4M1803.6 293.2h23.8M1803.6 295.2h19.9M1803.6 297.2h22.8M1803.6 299.2h24.7M1803.6 301.2h18.1M1803.6 305.2h18.1M1822.6 305.2h0.9M1803.6 307.2h18.1M1822.6 307.2h0.9M1803.6 309.2h19.0M1823.6 309.2h0.9M1803.6 311.2h20.9M1825.5 311.2h0.9M1803.6 313.2h16.1M1820.8 313.2h0.9M1803.6 315.2h23.8M1828.3 315.2h0.9M1808.8 319.2h7.6M1803.6 321.2h13.3M1817.9 321.2h0.9M1803.6 323.2h13.3M1817.9 323.2h0.9M1803.6 325.2h11.4M1816.0 325.2h0.9M1803.6 327.2h11.4M1816.0 327.2h0.9M1803.6 329.2h14.2M1818.8 329.2h0.9M1803.6 331.2h14.2M1818.8 331.2h0.9M1803.6 333.2h13.3M1803.6 341.2h13.3M1817.9 341.2h0.9M1811.6 345.2h7.6M1801.7 347.2h7.6M1810.7 355.2h9.5M1802.6 357.2h7.6M1808.0 359.2h7.6M1808.0 361.2h7.6M1816.6 361.2h8.5M1808.8 365.2h10.4M1798.8 367.2h7.6M1807.4 367.2h7.6M1798.8 369.2h4.8M1804.5 369.2h13.3M1818.8 369.2h7.6M1798.8 371.2h4.8M1804.5 371.2h9.5M1815.0 371.2h11.4M1827.5 371.2h11.4M1798.8 373.2h8.5M1808.3 373.2h13.3M1822.6 373.2h9.5M1803.6 377.2h20.9M1825.5 377.2h13.3M1839.8 377.2h20.9M1803.6 379.2h20.9M1825.5 379.2h13.3M1839.8 379.2h20.9M1803.6 381.2h20.9M1825.5 381.2h13.3M1839.8 381.2h20.9M1798.8 385.2h5.7M1810.3 385.2h19.0M1798.8 387.2h5.7M1810.3 387.2h19.0M1798.8 389.2h5.7M1810.3 389.2h19.0M1803.6 393.2h9.5M1814.1 393.2h19.0M1820.2 397.2h8.5M1802.6 399.2h7.6M1808.0 401.2h13.3M1806.1 403.2h9.5M1806.1 407.2h28.5M1822.0 415.2h13.3M1802.6 417.2h7.6M1811.2 417.2h13.3M1803.2 419.2h9.5M1813.7 419.2h13.3M1806.1 421.2h11.4M1818.5 421.2h9.5M1817.3 427.2h12.3M1803.6 429.2h15.2M1803.6 431.2h20.9M1825.5 431.2h8.5M1803.6 433.2h19.9M1803.6 435.2h13.3M1817.9 435.2h7.6M1803.6 437.2h19.0M1823.6 437.2h8.5M1803.6 439.2h27.5M1832.1 439.2h9.5M1803.6 441.2h18.1M1803.6 443.2h23.8M1814.5 447.2h17.1M1803.6 449.2h14.2M1803.6 451.2h9.5M1803.6 453.2h9.5M1803.6 455.2h19.9M1824.5 455.2h11.4M1803.6 457.2h22.8M1803.6 459.2h27.5M1832.1 459.2h5.7M1803.6 461.2h16.1M1803.6 463.2h24.7M1814.5 467.2h7.6M1803.6 469.2h26.6M1803.6 471.2h10.4M1815.0 471.2h12.3M1803.6 473.2h15.2M1812.5 477.2h5.7M1803.6 479.2h25.6M1803.6 481.2h19.0M1803.6 483.2h11.4M1803.6 485.2h18.1M1803.6 487.2h10.4M1810.7 491.2h9.5M1803.6 493.2h27.5M1803.6 495.2h22.8M1803.6 497.2h13.3M1817.9 497.2h0.9M1803.6 499.2h23.8M1803.6 501.2h13.3M1803.6 503.2h28.5M1833.1 503.2h12.3M1803.6 505.2h14.2M1803.6 507.2h13.3M1809.7 511.2h7.6M1803.6 513.2h27.5M1803.6 515.2h23.8M1803.6 517.2h17.1M1803.6 519.2h20.9M1825.5 519.2h3.8M1803.6 521.2h20.9M1803.6 523.2h28.5M1808.8 527.2h13.3M1803.6 529.2h17.1M1803.6 531.2h11.4M1816.0 531.2h10.4M1803.6 533.2h18.1M1803.6 535.2h23.8M1803.6 537.2h19.0M1803.6 539.2h26.6M1819.2 543.2h13.3M1803.6 545.2h19.0M1803.6 547.2h18.1M1803.6 549.2h19.9M1803.6 551.2h21.8M1803.6 553.2h22.8M1809.7 557.2h12.3M1803.6 559.2h14.2M1803.6 561.2h23.8M1828.3 561.2h8.5M1803.6 563.2h21.8M1803.6 565.2h18.1M1803.6 567.2h9.5M1803.6 569.2h26.6M1803.6 571.2h16.1M1820.8 571.2h4.8M1810.7 575.2h11.4M1803.6 577.2h10.4M1815.0 577.2h3.8M1803.6 579.2h19.0M1803.6 581.2h15.2M1819.8 581.2h16.1M1803.6 583.2h21.8M1817.3 587.2h7.6M1803.6 589.2h11.4M1803.6 591.2h16.1M1820.8 591.2h10.4M1803.6 593.2h19.9M1803.6 595.2h21.8M1803.6 597.2h10.4M1803.6 599.2h12.3M1803.6 601.2h26.6M1813.5 605.2h10.4M1803.6 607.2h26.6M1803.6 609.2h22.8M1803.6 611.2h27.5M1803.6 613.2h15.2M1819.8 613.2h3.8M1803.6 615.2h19.9M1803.6 617.2h12.3M1817.3 621.2h7.6M1803.6 623.2h20.9M1803.6 625.2h16.1M1803.6 627.2h23.8M1803.6 629.2h14.2M1803.6 631.2h18.1M1803.6 633.2h21.8M1803.6 635.2h18.1M1814.5 639.2h12.3M1803.6 641.2h12.3M1803.6 643.2h16.1M1820.8 643.2h8.5M1803.6 645.2h13.3M1817.9 645.2h11.4M1815.4 649.2h14.2M1803.6 651.2h17.1M1803.6 653.2h10.4M1803.6 655.2h17.1M1803.6 657.2h18.1M1803.6 659.2h24.7M1829.3 659.2h19.0M1803.6 661.2h9.5M1803.6 663.2h18.1M1811.6 667.2h17.1M1803.6 669.2h24.7M1803.6 671.2h19.9M1803.6 673.2h10.4M1803.6 675.2h25.6M1830.2 675.2h13.3M1803.6 677.2h25.6M1830.2 677.2h5.7M1803.6 679.2h21.8M1803.6 681.2h20.9M1803.6 683.2h15.2M1808.8 687.2h14.2M1803.6 689.2h9.5M1803.6 691.2h28.5M1803.6 693.2h13.3M1803.6 695.2h25.6M1803.6 697.2h25.6M1815.4 701.2h14.2M1803.6 703.2h10.4M1803.6 705.2h17.1M1821.7 705.2h1.9M1803.6 707.2h9.5M1803.6 709.2h11.4" stroke="#c9d3dc" stroke-width="1.300" stroke-dasharray="1.700 .600 .900 .400" fill="none" opacity="0.5"/><path d="M1796.7 123.2h2.8M1796.7 125.2h2.8M1805.9 161.2h13.3M1805.9 163.2h13.3M1805.9 165.2h13.3M1806.9 229.2h13.3M1810.7 231.2h23.8M1798.8 251.2h23.8M1817.9 333.2h11.4M1830.3 333.2h15.2M1803.6 335.2h20.9M1803.6 337.2h24.7M1811.2 399.2h17.1M1819.8 429.2h4.8M1824.5 433.2h12.3M1828.3 443.2h9.5M1827.4 457.2h0.9M1823.6 481.2h8.5M1816.0 483.2h19.0M1822.6 485.2h14.2M1828.3 499.2h9.5M1817.9 501.2h17.1M1825.5 521.2h16.1M1823.6 537.2h19.0M1826.4 551.2h10.4M1814.1 567.2h5.7M1831.2 569.2h13.3M1816.0 589.2h17.1M1827.4 609.2h3.8M1816.9 617.2h9.5M1824.5 671.2h10.4M1815.0 703.2h1.9" stroke="#5fd8d0" stroke-width="1.300" stroke-dasharray="1.700 .600 .900 .400" fill="none" opacity="0.72"/><path d="M1800.5 123.2h9.5M1811.0 123.2h7.6M1819.6 123.2h4.8M1800.5 125.2h9.5M1811.0 125.2h8.5M1820.6 125.2h4.8M1821.2 229.2h22.8M1830.3 289.2h19.0M1830.3 291.2h19.0M1828.3 293.2h20.9M1850.2 293.2h17.1M1824.5 295.2h20.9M1846.5 295.2h17.1M1827.4 297.2h20.9M1849.3 297.2h17.1M1829.3 299.2h20.9M1851.2 299.2h17.1M1822.6 301.2h20.9M1844.5 301.2h17.1M1810.3 347.2h5.7M1817.0 347.2h4.8M1822.8 347.2h7.6M1822.6 441.2h10.4M1818.8 449.2h0.9M1820.8 461.2h13.3M1829.3 463.2h10.4M1831.2 469.2h10.4M1819.8 473.2h9.5M1830.2 479.2h1.9M1832.1 493.2h10.4M1818.8 505.2h12.3M1833.1 523.2h14.2M1821.7 529.2h15.2M1822.6 533.2h10.4M1828.3 535.2h7.6M1822.6 547.2h15.2M1824.5 549.2h7.6M1827.4 553.2h10.4M1818.8 559.2h5.7M1822.6 565.2h18.1M1826.4 583.2h13.3M1824.5 593.2h11.4M1826.4 595.2h2.8M1815.0 597.2h16.1M1816.9 599.2h8.5M1831.2 601.2h8.5M1831.2 607.2h19.0M1820.8 625.2h14.2M1818.8 629.2h18.1M1822.6 631.2h14.2M1822.6 635.2h14.2M1821.7 655.2h3.8M1814.1 661.2h3.8M1822.6 663.2h16.1M1814.1 689.2h12.3M1833.1 691.2h14.2M1830.2 695.2h14.2" stroke="#7fdc6a" stroke-width="1.300" stroke-dasharray="1.700 .600 .900 .400" fill="none" opacity="0.72"/><path d="M1795.8 153.2h19.0M1798.2 249.2h8.5M1798.2 287.2h10.4M1798.2 319.2h9.5M1798.2 345.2h12.3M1798.2 355.2h11.4M1798.2 365.2h9.5M1798.2 397.2h20.9M1798.2 415.2h22.8M1798.2 427.2h18.1M1798.2 447.2h15.2M1798.2 467.2h15.2M1798.2 477.2h13.3M1798.2 491.2h11.4M1798.2 511.2h10.4M1798.2 527.2h9.5M1798.2 543.2h19.9M1798.2 557.2h10.4M1798.2 575.2h11.4M1798.2 587.2h18.1M1798.2 605.2h14.2M1798.2 621.2h18.1M1798.2 639.2h15.2M1798.2 649.2h16.1M1798.2 667.2h12.3M1798.2 687.2h9.5M1798.2 701.2h16.1" stroke="#ffc600" stroke-width="1.300" stroke-dasharray="1.700 .600 .900 .400" fill="none" opacity="0.72"/><path d="M1805.9 167.2h17.1M1794.4 171.2h8.5M1805.9 171.2h1.9M1794.4 173.2h13.3M1810.7 173.2h3.8M1811.6 175.2h1.9M1794.4 179.2h8.5M1805.9 179.2h1.9M1794.4 181.2h13.3M1810.7 181.2h3.8M1811.6 183.2h1.9M1802.1 187.2h0.9M1809.7 189.2h0.9M1807.8 191.2h0.9M1802.1 195.2h0.9M1809.7 197.2h0.9M1807.8 199.2h0.9M1794.4 203.2h7.6M1805.0 203.2h1.9M1805.9 211.2h1.9M1805.9 213.2h3.8M1805.9 215.2h3.8M1801.2 217.2h2.8M1811.6 223.2h4.8M1817.3 225.2h4.8M1806.9 235.2h5.7M1807.8 237.2h4.8M1809.7 239.2h5.7M1810.7 241.2h4.8M1808.8 243.2h5.7M1809.7 245.2h5.7M1872.8 273.2h3.8M1872.8 275.2h3.8M1872.8 277.2h3.8M1841.7 281.2h3.8M1824.6 305.2h0.9M1824.6 307.2h3.8M1825.5 309.2h1.9M1827.5 311.2h1.9M1822.7 313.2h1.9M1830.3 315.2h3.8M1819.8 321.2h1.9M1819.8 323.2h1.9M1818.0 325.2h1.9M1818.0 327.2h1.9M1820.8 329.2h1.9M1820.8 331.2h1.9M1819.8 341.2h4.8M1809.9 349.2h3.8M1805.5 351.2h4.8M1861.7 377.2h7.6M1861.7 379.2h7.6M1861.7 381.2h7.6M1814.3 405.2h3.8M1835.6 407.2h11.4M1814.3 409.2h3.8M1805.5 411.2h4.8M1814.3 423.2h3.8M1814.1 451.2h10.4M1814.1 453.2h16.1M1815.0 487.2h1.9M1827.4 495.2h19.0M1817.9 507.2h0.9M1832.1 513.2h4.8M1828.3 515.2h9.5M1821.7 517.2h8.5M1823.6 545.2h7.6M1826.4 563.2h4.8M1823.6 579.2h4.8M1832.1 611.2h11.4M1825.5 623.2h12.3M1828.3 627.2h11.4M1816.9 641.2h18.1M1821.7 651.2h6.6M1815.0 653.2h6.6M1822.6 657.2h14.2M1826.4 679.2h12.3M1825.5 681.2h14.2M1819.8 683.2h8.5M1817.9 693.2h4.8M1830.2 697.2h3.8M1814.1 707.2h9.5M1816.0 709.2h11.4" stroke="#ff628c" stroke-width="1.300" stroke-dasharray="1.700 .600 .900 .400" fill="none" opacity="0.72"/><path d="M1815.5 173.2h15.2M1815.5 181.2h15.2M1820.7 253.2h20.9M1842.6 253.2h13.3M1856.9 253.2h13.3" stroke="#1e90ff" stroke-width="1.300" stroke-dasharray="1.700 .600 .900 .400" fill="none" opacity="0.72"/><path d="M1798.8 255.2h3.8M1798.8 257.2h3.8M1798.8 259.2h3.8M1798.8 261.2h3.8M1798.8 263.2h3.8M1798.8 265.2h3.8M1798.8 267.2h3.8M1803.2 273.2h3.8M1853.7 273.2h9.5M1803.2 275.2h3.8M1853.7 275.2h9.5M1803.2 277.2h3.8M1853.7 277.2h9.5M1798.8 283.2h3.8M1798.8 289.2h3.8M1798.8 291.2h3.8M1798.8 293.2h3.8M1798.8 295.2h3.8M1798.8 297.2h3.8M1798.8 299.2h3.8M1798.8 301.2h3.8M1798.8 305.2h3.8M1798.8 307.2h3.8M1798.8 309.2h3.8M1798.8 311.2h3.8M1798.8 313.2h3.8M1798.8 315.2h3.8M1798.8 321.2h3.8M1798.8 323.2h3.8M1798.8 325.2h3.8M1798.8 327.2h3.8M1798.8 329.2h3.8M1798.8 331.2h3.8M1798.8 333.2h3.8M1798.8 335.2h3.8M1798.8 337.2h3.8M1798.8 341.2h3.8M1803.2 359.2h3.8M1803.2 361.2h3.8M1798.8 377.2h3.8M1798.8 379.2h3.8M1798.8 381.2h3.8M1805.5 385.2h3.8M1830.3 385.2h20.9M1805.5 387.2h3.8M1830.3 387.2h20.9M1805.5 389.2h3.8M1830.3 389.2h20.9M1798.8 393.2h3.8M1803.2 401.2h3.8M1798.8 429.2h3.8M1798.8 431.2h3.8M1798.8 433.2h3.8M1798.8 435.2h3.8M1798.8 437.2h3.8M1798.8 439.2h3.8M1798.8 441.2h3.8M1798.8 443.2h3.8M1798.8 449.2h3.8M1798.8 451.2h3.8M1798.8 453.2h3.8M1798.8 455.2h3.8M1798.8 457.2h3.8M1798.8 459.2h3.8M1798.8 461.2h3.8M1798.8 463.2h3.8M1798.8 469.2h3.8M1798.8 471.2h3.8M1798.8 473.2h3.8M1798.8 479.2h3.8M1798.8 481.2h3.8M1798.8 483.2h3.8M1798.8 485.2h3.8M1798.8 487.2h3.8M1798.8 493.2h3.8M1798.8 495.2h3.8M1798.8 497.2h3.8M1798.8 499.2h3.8M1798.8 501.2h3.8M1798.8 503.2h3.8M1798.8 505.2h3.8M1798.8 507.2h3.8M1798.8 513.2h3.8M1798.8 515.2h3.8M1798.8 517.2h3.8M1798.8 519.2h3.8M1798.8 521.2h3.8M1798.8 523.2h3.8M1798.8 529.2h3.8M1798.8 531.2h3.8M1798.8 533.2h3.8M1798.8 535.2h3.8M1798.8 537.2h3.8M1798.8 539.2h3.8M1798.8 545.2h3.8M1798.8 547.2h3.8M1798.8 549.2h3.8M1798.8 551.2h3.8M1798.8 553.2h3.8M1798.8 559.2h3.8M1798.8 561.2h3.8M1798.8 563.2h3.8M1798.8 565.2h3.8M1798.8 567.2h3.8M1798.8 569.2h3.8M1798.8 571.2h3.8M1798.8 577.2h3.8M1798.8 579.2h3.8M1798.8 581.2h3.8M1798.8 583.2h3.8M1798.8 589.2h3.8M1798.8 591.2h3.8M1798.8 593.2h3.8M1798.8 595.2h3.8M1798.8 597.2h3.8M1798.8 599.2h3.8M1798.8 601.2h3.8M1798.8 607.2h3.8M1798.8 609.2h3.8M1798.8 611.2h3.8M1798.8 613.2h3.8M1798.8 615.2h3.8M1798.8 617.2h3.8M1798.8 623.2h3.8M1798.8 625.2h3.8M1798.8 627.2h3.8M1798.8 629.2h3.8M1798.8 631.2h3.8M1798.8 633.2h3.8M1798.8 635.2h3.8M1798.8 641.2h3.8M1798.8 643.2h3.8M1798.8 645.2h3.8M1798.8 651.2h3.8M1798.8 653.2h3.8M1798.8 655.2h3.8M1798.8 657.2h3.8M1798.8 659.2h3.8M1798.8 661.2h3.8M1798.8 663.2h3.8M1798.8 669.2h3.8M1798.8 671.2h3.8M1798.8 673.2h3.8M1798.8 675.2h3.8M1798.8 677.2h3.8M1798.8 679.2h3.8M1798.8 681.2h3.8M1798.8 683.2h3.8M1798.8 689.2h3.8M1798.8 691.2h3.8M1798.8 693.2h3.8M1798.8 695.2h3.8M1798.8 697.2h3.8M1798.8 703.2h3.8M1798.8 705.2h3.8M1798.8 707.2h3.8M1798.8 709.2h3.8" stroke="#e49bff" stroke-width="1.300" stroke-dasharray="1.700 .600 .900 .400" fill="none" opacity="0.72"/><path d="M1902.500 108V712" stroke="#1d4264" stroke-width="1"/></svg></div>
<div id="panel" class="abs"></div><span class="tx" style="left:368px;top:724.6px;height:20px;line-height:20px;font-size:13.6px;color:#8b979f;transform:scaleX(0.8997);">PROBLEMS</span><svg class="abs" style="left:1719px;top:724px" width="21" height="21" viewBox="0 0 21 21" ><g fill="none" stroke="#aab4bc" stroke-width="1.400"><path d="M3.200 2.600h15.600l-1.200 15.400H1.800z" stroke-linejoin="round"/><path d="M5.800 7l4 3.200-4.400 3.200M10.800 14.200h4.600"/></g></svg><span class="tx" style="left:1745px;top:723.9px;height:23px;line-height:23px;font-size:15.6px;color:#aab4bc;transform:scaleX(0.8854);">Python</span><svg class="abs" style="left:1801px;top:726px" width="17" height="17" viewBox="0 0 17 17" ><path d="M8.500 0.500v16M0.500 8.500h16" stroke="#aab4bc" stroke-width="1.400"/></svg><svg class="abs" style="left:1824px;top:731px" width="11" height="7" viewBox="0 0 11 7" ><path d="M1 1l4.500 4.500L10 1" fill="none" stroke="#aab4bc" stroke-width="1.300"/></svg><svg class="abs" style="left:1851px;top:729px" width="14" height="9" viewBox="0 0 14 9" ><path d="M1 8l6-6.500L13 8" fill="none" stroke="#aab4bc" stroke-width="1.500"/></svg><svg class="abs" style="left:1884.5px;top:729.5px" width="11.5" height="11.5" viewBox="0 0 11.5 11.5" ><path d="M0.700 0.700L10.8 10.8M10.8 0.700L0.700 10.8" stroke="#aab4bc" stroke-width="1.5" fill="none"/></svg><span class="tx" style="left:367.5px;top:765.5px;height:27px;line-height:27px;font-size:18px;color:#ffffff;transform:scaleX(1.0133);">foo1</span><span class="tx" style="left:367.5px;top:785.5px;height:27px;line-height:27px;font-size:18px;color:#ffffff;transform:scaleX(1.0419);">foo2</span><span class="tx" style="left:367.5px;top:805.5px;height:27px;line-height:27px;font-size:18px;color:#ffffff;transform:scaleX(1.0133);">foo1</span><span class="tx" style="left:367.5px;top:825.5px;height:27px;line-height:27px;font-size:18px;color:#ffffff;transform:scaleX(1.0419);">foo2</span><span class="tx" style="left:367.5px;top:845.5px;height:27px;line-height:27px;font-size:18px;color:#ffffff;transform:scaleX(1.0133);">foo1</span><span class="tx" style="left:367.5px;top:865.5px;height:27px;line-height:27px;font-size:18px;color:#ffffff;transform:scaleX(1.0419);">foo2</span><span class="tx" style="left:367.5px;top:885.5px;height:27px;line-height:27px;font-size:18px;color:#ffffff;transform:scaleX(1.0133);">foo1</span><span class="tx" style="left:367.5px;top:905.5px;height:27px;line-height:27px;font-size:18px;color:#ffffff;transform:scaleX(1.0419);">foo2</span><span class="tx" style="left:367.5px;top:925.5px;height:27px;line-height:27px;font-size:18px;color:#ffffff;transform:scaleX(1.0133);">foo1</span><span class="tx" style="left:367.5px;top:945.5px;height:27px;line-height:27px;font-size:18px;color:#ffffff;transform:scaleX(1.0419);">foo2</span><div class="abs" style="left:367px;top:970px;width:10px;height:20px;border:1.300px solid #ffc600"></div>
<div id="status" class="abs"></div><div class="abs" style="left:0;top:992.800px;width:42px;height:26.200px;background:#ffc600"></div><svg class="abs" style="left:12px;top:995px" width="18" height="20" viewBox="12 995 18 20" ><path d="M14.900 1002.500l4.600 4.600-4.600 4.600M25.900 997.500l-4.400 4.600 4.400 4.600" fill="none" stroke="#26261a" stroke-width="1.350"/></svg><div class="abs" style="left:0;top:1019px;width:1914px;height:3px;background:#0f1f3c"></div><span class="tx" style="left:51.5px;top:994.1px;height:23px;line-height:23px;font-size:15.6px;color:#aab4bc;transform:scaleX(0.9545);">Python 3.9.4 64-bit</span><svg class="abs" style="left:197px;top:997.5px" width="17" height="17" viewBox="0 0 17 17" ><g fill="none" stroke="#aab4bc" stroke-width="1.500"><circle cx="8.500" cy="8.500" r="7.300"/><path d="M5.500 5.500l6 6M11.500 5.500l-6 6"/></g></svg><span class="tx" style="left:218.5px;top:994.1px;height:23px;line-height:23px;font-size:15.6px;color:#aab4bc;transform:scaleX(0.9221);">0</span><svg class="abs" style="left:232px;top:998px" width="17" height="16" viewBox="0 0 17 16" ><g fill="none" stroke="#aab4bc" stroke-width="1.500"><path d="M8.500 1.500L15.800 14.500H1.200Z" stroke-linejoin="round"/><path d="M8.500 6v4.500M8.500 11.600v1.400"/></g></svg><span class="tx" style="left:252px;top:994.1px;height:23px;line-height:23px;font-size:15.6px;color:#aab4bc;transform:scaleX(0.9221);">0</span><svg class="abs" style="left:283px;top:998px" width="13" height="16" viewBox="0 0 13 16" ><g fill="none" stroke="#aab4bc" stroke-width="1.400"><ellipse cx="6.500" cy="3.200" rx="5.300" ry="2.300"/><path d="M1.200 3.200v9.600c0 1.300 2.400 2.300 5.300 2.300s5.300-1 5.300-2.300V3.200"/></g></svg><span class="tx" style="left:301.5px;top:994.1px;height:23px;line-height:23px;font-size:15.6px;color:#aab4bc;transform:scaleX(0.9552);">Connect</span><svg class="abs" style="left:381px;top:996px" width="11" height="19" viewBox="0 0 11 19" ><g fill="none" stroke="#aab4bc" stroke-width="1.500"><circle cx="5.500" cy="9" r="3.300"/><path d="M5.500 0.500v5.200M5.500 12.300v6"/></g></svg><span class="tx" style="left:414.5px;top:994.1px;height:23px;line-height:23px;font-size:15.6px;color:#aab4bc;transform:scaleX(0.9215);">KvLang Python</span><svg class="abs" style="left:533px;top:998px" width="16" height="16" viewBox="0 0 16 16" ><g fill="none" stroke="#aab4bc" stroke-width="1.500"><rect x="1" y="1" width="14" height="3.600"/><rect x="1" y="6.200" width="14" height="3.600"/><rect x="1" y="11.400" width="14" height="3.600"/></g></svg><span class="tx" style="left:554px;top:994.1px;height:23px;line-height:23px;font-size:15.6px;color:#aab4bc;transform:scaleX(0.9375);">Server not selected</span><svg class="abs" style="left:700px;top:998px" width="17" height="15" viewBox="0 0 17 15" ><path d="M0.500 8.500h3.500l2-6 3 10.500 2.200-6.500 1.300 2h4" fill="none" stroke="#aab4bc" stroke-width="1.500" stroke-linejoin="round"/></svg><span class="tx" style="left:722px;top:994.1px;height:23px;line-height:23px;font-size:15.6px;color:#aab4bc;transform:scaleX(0.9460);">Connecting to Discord...</span><span class="tx" style="left:1334px;top:994.1px;height:23px;line-height:23px;font-size:15.6px;color:#aab4bc;transform:scaleX(0.9145);">Ln 1, Col 1</span><span class="tx" style="left:1423px;top:994.1px;height:23px;line-height:23px;font-size:15.6px;color:#aab4bc;transform:scaleX(0.8792);">Spaces: 4</span><span class="tx" style="left:1504px;top:994.1px;height:23px;line-height:23px;font-size:15.6px;color:#aab4bc;transform:scaleX(0.9051);">UTF-8</span><span class="tx" style="left:1564px;top:994.1px;height:23px;line-height:23px;font-size:15.6px;color:#aab4bc;transform:scaleX(0.7965);">LF</span><span class="tx" style="left:1598.5px;top:994.1px;height:23px;line-height:23px;font-size:15.6px;color:#aab4bc;transform:scaleX(0.9574);">Python</span><svg class="abs" style="left:1666px;top:997.5px" width="16" height="17" viewBox="0 0 16 17" ><g fill="none" stroke="#aab4bc" stroke-width="1.500"><path d="M3.800 12.200a6.200 6.200 0 1 1 8.400 0M5.800 10a3.200 3.200 0 1 1 4.400 0"/><path d="M8 8v8" stroke-width="1.800"/></g><circle cx="8" cy="7.600" r="1.500" fill="#aab4bc"/></svg><span class="tx" style="left:1686.5px;top:994.1px;height:23px;line-height:23px;font-size:15.6px;color:#aab4bc;transform:scaleX(0.9021);">Go Live</span><svg class="abs" style="left:1755.5px;top:997.5px" width="17" height="17" viewBox="0 0 17 17" ><g fill="none" stroke="#aab4bc" stroke-width="1.400"><circle cx="8.500" cy="8.500" r="7.300"/><path d="M3.500 13.500l10-10"/></g></svg><span class="tx" style="left:1777.5px;top:994.1px;height:23px;line-height:23px;font-size:15.6px;color:#aab4bc;transform:scaleX(0.9546);">Prettier</span><svg class="abs" style="left:1846px;top:997px" width="18" height="18" viewBox="0 0 18 18" ><g fill="none" stroke="#aab4bc" stroke-width="1.500"><path d="M8 1.500h8.500v7h-2.500l-2.200 2.200V8.500H11"/><circle cx="6" cy="7.500" r="2.600"/><path d="M1 17c0-3.500 2-5.500 5-5.500s5 2 5 5.500"/></g></svg><svg class="abs" style="left:1884px;top:997px" width="16" height="18" viewBox="0 0 16 18" ><g fill="none" stroke="#aab4bc" stroke-width="1.500"><path d="M8 1.200c-3.200 0-5.200 2.300-5.200 5.300v4.500L1.200 13.800h13.600L13.200 11V6.500c0-3-2-5.300-5.200-5.300z" stroke-linejoin="round"/><path d="M6.200 15.200a1.900 1.900 0 0 0 3.600 0"/></g></svg>
<div id="game" class="abs" style="left:397px;top:251px;width:1124.5px;height:537.5px;border-radius:8px 8px 5px 5px;overflow:hidden;background:#02000a;box-shadow:0 10px 34px 4px rgba(0,0,0,0.400),0 0 2px rgba(0,0,0,0.300)"><div class="abs" style="left:0;top:0;width:100%;height:38px;background:#fff"></div><svg class="abs" style="left:10.7px;top:8.6px" width="18.6" height="18.6" viewBox="0 0 18.6 18.6" ><circle cx="9.300" cy="9.300" r="9.200" fill="#414141"/><g transform="translate(3.200 5) scale(0.700)"><polygon points="0.4,0.4 4.5,5 0.4,7.4" fill="#e8e8e8"/><polygon points="0.4,8.6 3.7,12.3 4.1,6.2" fill="#d8d8d8"/><polygon points="4.1,0 8.6,12.3 13.2,8.2" fill="#f4f4f4"/><polygon points="5.8,2.1 18.5,2.9 12.3,9.5" fill="#ffffff"/></g></svg><span class="tx" style="left:35px;top:6.700px;height:24px;line-height:24px;font-size:15.200px;color:#111;transform:scaleX(.93)">Galaxy</span><svg class="abs" style="left:972px;top:18px" width="12" height="2" viewBox="0 0 12 2" ><path d="M0 1h12" stroke="#111" stroke-width="1.200"/></svg><svg class="abs" style="left:1030px;top:13px" width="12" height="12" viewBox="0 0 12 12" ><rect x=".600" y=".600" width="10.800" height="10.800" rx="1.600" fill="none" stroke="#111" stroke-width="1.200"/></svg><svg class="abs" style="left:1089px;top:13px" width="12" height="12" viewBox="0 0 12 12" ><path d="M.400.400l11.200 11.200M11.600.400L.400 11.600" stroke="#111" stroke-width="1.200"/></svg><svg class="abs" style="left:0;top:38px" width="1124.5" height="499.5" viewBox="397 289 1124.5 499.5"><defs><linearGradient id="bgv" x1="0" y1="289" x2="0" y2="789" gradientUnits="userSpaceOnUse"><stop offset="0" stop-color="#03021a"/><stop offset=".2" stop-color="#04042a"/><stop offset=".3" stop-color="#04042a"/><stop offset=".5" stop-color="#030316"/><stop offset="1" stop-color="#02000a"/></linearGradient><radialGradient id="haze" cx="930" cy="400" r="1" gradientUnits="userSpaceOnUse" gradientTransform="translate(930 400) scale(640 130) translate(-930 -400)"><stop offset="0" stop-color="#2434c8" stop-opacity=".8"/><stop offset=".35" stop-color="#161c94" stop-opacity=".52"/><stop offset=".7" stop-color="#0e1068" stop-opacity=".25"/><stop offset="1" stop-color="#0c0c5a" stop-opacity="0"/></radialGradient><linearGradient id="bandv" x1="0" y1="350" x2="0" y2="440" gradientUnits="userSpaceOnUse"><stop offset="0" stop-color="#1838ff" stop-opacity="0"/><stop offset=".3" stop-color="#1a34e0" stop-opacity=".3"/><stop offset=".44" stop-color="#2450f0" stop-opacity=".7"/><stop offset=".5" stop-color="#3468ff" stop-opacity=".9"/><stop offset=".56" stop-color="#2450f0" stop-opacity=".7"/><stop offset=".7" stop-color="#1a34e0" stop-opacity=".3"/><stop offset="1" stop-color="#1838ff" stop-opacity="0"/></linearGradient><linearGradient id="bandh" x1="397" y1="0" x2="1522" y2="0" gradientUnits="userSpaceOnUse"><stop offset="0" stop-color="#fff" stop-opacity=".34"/><stop offset=".13" stop-color="#fff" stop-opacity=".34"/><stop offset=".3" stop-color="#fff" stop-opacity=".7"/><stop offset=".48" stop-color="#fff"/><stop offset=".7" stop-color="#fff" stop-opacity=".9"/><stop offset=".88" stop-color="#fff" stop-opacity=".5"/><stop offset="1" stop-color="#fff" stop-opacity=".35"/></linearGradient><mask id="bandm"><rect x="397" y="340" width="1125" height="110" fill="url(#bandh)"/></mask><radialGradient id="flare" cx="942" cy="394" r="1" gradientUnits="userSpaceOnUse" gradientTransform="translate(942 394) scale(98 44) translate(-942 -394)"><stop offset="0" stop-color="#fff"/><stop offset=".2" stop-color="#fff"/><stop offset=".42" stop-color="#f0c0ff" stop-opacity=".9"/><stop offset=".7" stop-color="#a868f0" stop-opacity=".42"/><stop offset="1" stop-color="#5030d0" stop-opacity="0"/></radialGradient><radialGradient id="flare2" cx="942" cy="394" r="1" gradientUnits="userSpaceOnUse" gradientTransform="translate(942 394) scale(330 12) translate(-942 -394)"><stop offset="0" stop-color="#fff"/><stop offset=".25" stop-color="#cfe0ff" stop-opacity=".9"/><stop offset=".6" stop-color="#5a8cff" stop-opacity=".6"/><stop offset="1" stop-color="#2a50ff" stop-opacity="0"/></radialGradient><radialGradient id="pl1" cx="452" cy="370" r="100" gradientUnits="userSpaceOnUse"><stop offset="0" stop-color="#05041c" stop-opacity=".55"/><stop offset=".8" stop-color="#07062a" stop-opacity=".7"/><stop offset=".9" stop-color="#3a1a58"/><stop offset=".955" stop-color="#b04a78"/><stop offset=".985" stop-color="#e07898"/><stop offset="1" stop-color="#c05a80"/></radialGradient><radialGradient id="pl2" cx="1090" cy="345" r="240" gradientUnits="userSpaceOnUse"><stop offset="0" stop-color="#f4c8f4"/><stop offset=".22" stop-color="#dcaaee"/><stop offset=".34" stop-color="#9078da"/><stop offset=".46" stop-color="#3238b8"/><stop offset=".6" stop-color="#14187a"/><stop offset=".76" stop-color="#080a3a"/><stop offset=".92" stop-color="#03031a"/><stop offset="1" stop-color="#03031a"/></radialGradient><radialGradient id="pl2rim" cx="1306" cy="459" r="246" gradientUnits="userSpaceOnUse"><stop offset=".9" stop-color="#3050ff" stop-opacity="0"/><stop offset=".955" stop-color="#7088ff" stop-opacity=".9"/><stop offset=".975" stop-color="#4060ff" stop-opacity=".5"/><stop offset="1" stop-color="#2040ff" stop-opacity="0"/></radialGradient><linearGradient id="rimfade" x1="1060" y1="0" x2="1260" y2="0" gradientUnits="userSpaceOnUse"><stop offset="0" stop-color="#fff"/><stop offset=".5" stop-color="#fff" stop-opacity=".6"/><stop offset="1" stop-color="#fff" stop-opacity="0"/></linearGradient><mask id="rimm"><rect x="1040" y="200" width="520" height="420" fill="url(#rimfade)"/></mask><filter id="bl3" x="-50%" y="-50%" width="200%" height="200%"><feGaussianBlur stdDeviation="3"/></filter><filter id="bl8" x="-50%" y="-50%" width="200%" height="200%"><feGaussianBlur stdDeviation="8"/></filter><filter id="bl14" x="-50%" y="-50%" width="200%" height="200%"><feGaussianBlur stdDeviation="14"/></filter><filter id="bl1"><feGaussianBlur stdDeviation=".6"/></filter><linearGradient id="rdark" x1="1300" y1="0" x2="1430" y2="0" gradientUnits="userSpaceOnUse"><stop offset="0" stop-color="#03031a" stop-opacity="0"/><stop offset="1" stop-color="#03031a"/></linearGradient><linearGradient id="rdarkv" x1="0" y1="289" x2="0" y2="789" gradientUnits="userSpaceOnUse"><stop offset="0" stop-color="#fff"/><stop offset="0.6" stop-color="#fff"/><stop offset=".85" stop-color="#fff" stop-opacity="0"/></linearGradient><mask id="rdm"><rect x="1300" y="289" width="230" height="500" fill="url(#rdarkv)"/></mask><linearGradient id="plfade" x1="0" y1="540" x2="0" y2="670" gradientUnits="userSpaceOnUse"><stop offset="0" stop-color="#fff"/><stop offset="1" stop-color="#fff" stop-opacity="0"/></linearGradient><mask id="plm"><rect x="1060" y="220" width="480" height="480" fill="url(#plfade)"/></mask><radialGradient id="haze2"><stop offset="0" stop-color="#1424a8" stop-opacity=".5"/><stop offset=".5" stop-color="#1220a0" stop-opacity=".3"/><stop offset="1" stop-color="#1220a0" stop-opacity="0"/></radialGradient><radialGradient id="haze3"><stop offset="0" stop-color="#1630d0" stop-opacity=".55"/><stop offset=".5" stop-color="#1428c0" stop-opacity=".3"/><stop offset="1" stop-color="#1428c0" stop-opacity="0"/></radialGradient><clipPath id="pc2"><circle cx="1306" cy="459" r="235"/></clipPath></defs><rect x="397" y="289" width="1125" height="500" fill="url(#bgv)"/><rect x="397" y="289" width="1125" height="500" fill="url(#haze)"/><ellipse cx="950" cy="495" rx="260" ry="105" fill="url(#haze2)"/><ellipse cx="990" cy="545" rx="150" ry="45" fill="url(#haze3)"/><g filter="url(#bl8)"><ellipse cx="565" cy="430" rx="30" ry="18" fill="#9a78d8" opacity=".5"/><ellipse cx="740" cy="440" rx="55" ry="13" fill="#c84a6a" opacity=".55" transform="rotate(16 740 440)"/><ellipse cx="790" cy="455" rx="100" ry="16" fill="#a8406a" opacity=".4" transform="rotate(17 790 455)"/><ellipse cx="820" cy="470" rx="55" ry="12" fill="#a03a70" opacity=".4" transform="rotate(20 820 470)"/><ellipse cx="640" cy="460" rx="60" ry="30" fill="#2838c0" opacity=".3"/><ellipse cx="1020" cy="560" rx="70" ry="22" fill="#1838e0" opacity=".55"/><ellipse cx="560" cy="470" rx="26" ry="16" fill="#2a48e8" opacity=".35"/></g><g filter="url(#bl3)"><ellipse cx="568" cy="426" rx="13" ry="8" fill="#e0b8f0" opacity=".55"/><ellipse cx="735" cy="437" rx="26" ry="5" fill="#f07080" opacity=".5" transform="rotate(16 735 437)"/></g><path d="M1318 379h1.1v1.1h-1.1zM671 390h1.1v1.1h-1.1zM1196 438h0.9v0.9h-0.9zM1136 324h0.8v0.8h-0.8zM570 342h0.9v0.9h-0.9zM1413 417h0.8v0.8h-0.8zM1015 452h0.8v0.8h-0.8zM459 425h1.3v1.3h-1.3zM573 423h1.4v1.4h-1.4zM804 360h0.9v0.9h-0.9zM861 432h1.3v1.3h-1.3zM908 408h0.9v0.9h-0.9zM1300 374h1.4v1.4h-1.4zM769 424h1.2v1.2h-1.2zM959 363h0.9v0.9h-0.9zM911 380h0.9v0.9h-0.9zM1019 423h1.3v1.3h-1.3zM1136 479h1.1v1.1h-1.1zM1148 501h0.9v0.9h-0.9zM771 387h1.1v1.1h-1.1zM977 456h1.4v1.4h-1.4zM1018 362h1.3v1.3h-1.3zM1003 468h1.3v1.3h-1.3zM779 389h1.4v1.4h-1.4zM974 455h1.3v1.3h-1.3zM732 454h0.8v0.8h-0.8zM1369 453h0.9v0.9h-0.9zM574 376h1.1v1.1h-1.1zM1367 392h1.1v1.1h-1.1zM1078 382h0.9v0.9h-0.9zM901 449h1.2v1.2h-1.2zM1159 395h1.4v1.4h-1.4zM1322 355h1.1v1.1h-1.1zM994 420h1.4v1.4h-1.4zM948 503h1.0v1.0h-1.0zM1153 338h1.0v1.0h-1.0zM1203 495h0.8v0.8h-0.8zM973 486h1.3v1.3h-1.3zM644 378h1.4v1.4h-1.4zM922 421h1.0v1.0h-1.0zM760 417h0.9v0.9h-0.9zM528 467h0.9v0.9h-0.9zM1510 399h1.2v1.2h-1.2zM701 393h0.8v0.8h-0.8zM1492 421h1.1v1.1h-1.1zM855 358h1.4v1.4h-1.4zM1370 444h1.2v1.2h-1.2zM1456 352h1.2v1.2h-1.2zM519 483h1.3v1.3h-1.3zM1201 365h1.3v1.3h-1.3zM1258 351h1.2v1.2h-1.2zM490 463h1.2v1.2h-1.2zM1425 451h1.4v1.4h-1.4zM1394 344h1.0v1.0h-1.0zM848 331h1.1v1.1h-1.1zM993 389h1.3v1.3h-1.3zM1460 425h1.1v1.1h-1.1zM981 502h1.1v1.1h-1.1zM898 419h1.0v1.0h-1.0zM777 374h0.9v0.9h-0.9zM1412 361h1.1v1.1h-1.1zM1191 376h1.2v1.2h-1.2zM1042 470h1.3v1.3h-1.3zM485 463h1.0v1.0h-1.0zM1223 463h1.3v1.3h-1.3zM1285 333h1.4v1.4h-1.4zM857 446h1.1v1.1h-1.1zM854 451h1.0v1.0h-1.0zM555 360h1.0v1.0h-1.0zM742 417h0.8v0.8h-0.8zM985 397h1.2v1.2h-1.2zM574 388h1.3v1.3h-1.3zM1125 414h1.1v1.1h-1.1zM918 443h0.8v0.8h-0.8zM586 363h1.2v1.2h-1.2zM472 320h1.4v1.4h-1.4zM788 373h1.1v1.1h-1.1zM927 418h1.1v1.1h-1.1zM841 373h1.0v1.0h-1.0zM533 486h1.1v1.1h-1.1zM1049 396h1.4v1.4h-1.4zM862 379h1.1v1.1h-1.1zM510 464h1.3v1.3h-1.3zM1088 502h1.3v1.3h-1.3zM479 336h0.9v0.9h-0.9zM1416 399h1.3v1.3h-1.3zM506 529h1.3v1.3h-1.3zM799 430h1.1v1.1h-1.1zM799 411h1.3v1.3h-1.3zM1077 458h1.3v1.3h-1.3zM1051 436h1.1v1.1h-1.1zM767 297h1.2v1.2h-1.2zM1361 387h1.4v1.4h-1.4zM1155 432h1.1v1.1h-1.1zM731 504h1.2v1.2h-1.2zM562 391h1.0v1.0h-1.0zM1408 304h0.9v0.9h-0.9zM1058 481h1.1v1.1h-1.1zM821 401h1.4v1.4h-1.4zM477 404h1.3v1.3h-1.3zM449 383h1.2v1.2h-1.2zM1378 440h1.0v1.0h-1.0zM843 477h0.9v0.9h-0.9zM1288 370h1.0v1.0h-1.0zM1110 488h1.4v1.4h-1.4zM1402 486h0.8v0.8h-0.8zM1004 450h1.2v1.2h-1.2zM728 461h1.2v1.2h-1.2zM1438 470h0.9v0.9h-0.9zM582 407h0.9v0.9h-0.9zM458 398h1.0v1.0h-1.0zM459 448h0.9v0.9h-0.9zM1068 491h1.2v1.2h-1.2zM975 508h1.3v1.3h-1.3zM1200 380h1.0v1.0h-1.0zM1161 390h1.4v1.4h-1.4zM1071 389h0.9v0.9h-0.9zM852 364h0.9v0.9h-0.9zM1117 355h1.3v1.3h-1.3zM1200 453h1.2v1.2h-1.2zM1180 414h1.2v1.2h-1.2zM1273 457h1.3v1.3h-1.3zM960 431h0.9v0.9h-0.9zM1417 428h1.1v1.1h-1.1zM685 396h0.9v0.9h-0.9zM1130 520h1.4v1.4h-1.4zM1068 398h0.8v0.8h-0.8zM1346 390h1.3v1.3h-1.3zM681 470h1.1v1.1h-1.1zM1048 379h1.1v1.1h-1.1zM871 349h0.9v0.9h-0.9zM1156 472h0.8v0.8h-0.8zM1492 343h1.2v1.2h-1.2zM1279 345h1.0v1.0h-1.0zM497 368h1.4v1.4h-1.4zM1010 366h1.3v1.3h-1.3zM875 306h1.3v1.3h-1.3zM1371 347h1.3v1.3h-1.3zM941 349h1.2v1.2h-1.2zM1247 434h1.1v1.1h-1.1zM1293 414h1.2v1.2h-1.2zM683 379h1.4v1.4h-1.4zM708 363h1.2v1.2h-1.2zM430 379h1.0v1.0h-1.0zM1502 410h1.2v1.2h-1.2zM1475 422h1.2v1.2h-1.2zM882 471h0.8v0.8h-0.8zM1037 465h0.9v0.9h-0.9zM895 540h1.1v1.1h-1.1zM405 327h0.8v0.8h-0.8zM1154 467h0.9v0.9h-0.9zM449 445h1.2v1.2h-1.2zM671 447h1.2v1.2h-1.2zM582 392h1.2v1.2h-1.2zM880 420h0.9v0.9h-0.9zM1136 419h1.3v1.3h-1.3zM899 391h1.4v1.4h-1.4zM1054 402h1.3v1.3h-1.3zM468 439h1.4v1.4h-1.4zM920 483h1.4v1.4h-1.4zM820 344h1.4v1.4h-1.4zM1132 335h0.9v0.9h-0.9zM571 363h0.9v0.9h-0.9zM1387 434h0.9v0.9h-0.9zM585 423h1.1v1.1h-1.1zM915 439h1.3v1.3h-1.3zM1026 328h1.0v1.0h-1.0zM814 500h1.1v1.1h-1.1zM401 364h1.3v1.3h-1.3zM1017 452h1.4v1.4h-1.4zM1044 415h1.0v1.0h-1.0zM1320 455h0.8v0.8h-0.8zM1440 457h1.1v1.1h-1.1zM624 367h1.1v1.1h-1.1zM994 463h1.2v1.2h-1.2zM987 390h0.9v0.9h-0.9zM1113 332h1.3v1.3h-1.3zM1001 471h1.0v1.0h-1.0zM1048 356h1.2v1.2h-1.2zM1272 406h1.1v1.1h-1.1zM538 435h0.9v0.9h-0.9zM1020 393h0.8v0.8h-0.8zM455 383h1.2v1.2h-1.2zM681 509h0.8v0.8h-0.8zM1042 496h0.8v0.8h-0.8zM676 501h1.2v1.2h-1.2zM852 443h1.0v1.0h-1.0zM840 353h0.9v0.9h-0.9zM762 335h1.4v1.4h-1.4zM776 459h1.0v1.0h-1.0zM904 467h1.0v1.0h-1.0zM625 456h1.0v1.0h-1.0zM1083 483h1.3v1.3h-1.3zM658 396h1.3v1.3h-1.3zM1150 377h0.8v0.8h-0.8zM459 322h0.8v0.8h-0.8zM1050 422h1.2v1.2h-1.2zM1042 395h1.2v1.2h-1.2zM1330 488h1.2v1.2h-1.2zM908 452h1.3v1.3h-1.3z" fill="#8a90e8" opacity="0.35"/><path d="M574 461h1.6v1.6h-1.6zM618 401h1.2v1.2h-1.2zM686 381h1.5v1.5h-1.5zM505 375h1.4v1.4h-1.4zM1034 371h1.6v1.6h-1.6zM559 404h1.4v1.4h-1.4zM848 402h1.1v1.1h-1.1zM1019 490h1.6v1.6h-1.6zM648 456h1.0v1.0h-1.0zM568 454h1.6v1.6h-1.6zM968 452h0.9v0.9h-0.9zM491 387h0.9v0.9h-0.9zM1026 456h1.3v1.3h-1.3zM820 434h0.9v0.9h-0.9zM833 464h1.0v1.0h-1.0zM689 390h1.0v1.0h-1.0zM844 468h0.9v0.9h-0.9zM771 407h1.2v1.2h-1.2zM882 400h1.0v1.0h-1.0zM1198 385h1.1v1.1h-1.1zM577 443h0.8v0.8h-0.8zM1202 418h1.1v1.1h-1.1zM452 432h1.0v1.0h-1.0zM1140 437h1.0v1.0h-1.0zM1053 443h1.1v1.1h-1.1zM879 383h1.3v1.3h-1.3zM844 459h1.1v1.1h-1.1zM729 517h1.2v1.2h-1.2zM727 487h0.9v0.9h-0.9zM762 438h1.5v1.5h-1.5zM1035 382h0.9v0.9h-0.9zM708 500h0.9v0.9h-0.9zM470 445h1.6v1.6h-1.6zM608 503h1.1v1.1h-1.1zM858 432h1.5v1.5h-1.5zM844 486h1.2v1.2h-1.2zM1029 500h1.0v1.0h-1.0zM721 454h1.0v1.0h-1.0zM508 485h0.9v0.9h-0.9zM532 466h1.6v1.6h-1.6zM942 391h0.8v0.8h-0.8zM467 482h1.0v1.0h-1.0zM495 424h0.8v0.8h-0.8zM1225 436h1.0v1.0h-1.0zM599 419h1.1v1.1h-1.1zM548 432h1.1v1.1h-1.1zM460 475h1.0v1.0h-1.0zM890 499h1.1v1.1h-1.1zM1075 423h1.4v1.4h-1.4zM521 502h0.9v0.9h-0.9zM833 453h1.3v1.3h-1.3zM718 417h1.1v1.1h-1.1zM941 396h0.9v0.9h-0.9zM782 462h0.9v0.9h-0.9zM676 448h1.5v1.5h-1.5zM481 460h1.3v1.3h-1.3zM811 370h1.1v1.1h-1.1zM629 474h0.8v0.8h-0.8zM433 474h1.6v1.6h-1.6zM854 386h1.3v1.3h-1.3zM992 444h1.1v1.1h-1.1zM688 425h1.1v1.1h-1.1zM923 393h0.9v0.9h-0.9zM818 358h1.2v1.2h-1.2zM576 476h0.9v0.9h-0.9zM586 331h1.2v1.2h-1.2zM653 370h1.0v1.0h-1.0zM1104 422h1.0v1.0h-1.0zM929 454h1.3v1.3h-1.3zM684 408h1.5v1.5h-1.5zM574 472h0.9v0.9h-0.9zM898 437h1.5v1.5h-1.5zM439 427h1.2v1.2h-1.2zM709 523h1.6v1.6h-1.6zM905 393h0.9v0.9h-0.9zM857 412h1.5v1.5h-1.5zM779 490h1.5v1.5h-1.5zM889 484h0.9v0.9h-0.9zM921 445h1.6v1.6h-1.6zM1114 419h1.0v1.0h-1.0zM558 385h1.1v1.1h-1.1zM933 443h1.2v1.2h-1.2zM920 469h1.3v1.3h-1.3zM905 481h1.0v1.0h-1.0zM547 426h1.3v1.3h-1.3zM1137 453h0.9v0.9h-0.9zM1101 427h1.2v1.2h-1.2zM451 468h1.4v1.4h-1.4zM782 377h1.2v1.2h-1.2zM1256 438h1.5v1.5h-1.5zM527 462h1.3v1.3h-1.3zM1023 414h1.2v1.2h-1.2zM723 452h1.4v1.4h-1.4zM1102 404h1.3v1.3h-1.3zM763 408h1.3v1.3h-1.3zM881 448h1.2v1.2h-1.2zM499 439h0.8v0.8h-0.8zM652 396h1.0v1.0h-1.0zM670 476h1.0v1.0h-1.0zM1280 475h1.6v1.6h-1.6zM496 374h1.1v1.1h-1.1zM823 415h1.4v1.4h-1.4zM1135 479h0.9v0.9h-0.9zM954 440h1.0v1.0h-1.0zM718 452h1.5v1.5h-1.5zM865 405h1.1v1.1h-1.1zM692 434h0.8v0.8h-0.8zM939 421h1.2v1.2h-1.2zM1415 398h1.2v1.2h-1.2zM819 471h1.5v1.5h-1.5zM897 425h1.5v1.5h-1.5zM581 474h0.9v0.9h-0.9zM1381 354h1.0v1.0h-1.0zM646 422h1.5v1.5h-1.5zM877 446h1.4v1.4h-1.4zM545 515h1.5v1.5h-1.5zM728 420h1.4v1.4h-1.4zM1021 424h0.9v0.9h-0.9zM797 472h1.4v1.4h-1.4zM814 463h1.0v1.0h-1.0zM525 382h1.1v1.1h-1.1zM476 373h1.3v1.3h-1.3zM789 472h1.5v1.5h-1.5zM656 413h1.3v1.3h-1.3zM1387 498h1.2v1.2h-1.2zM445 432h0.8v0.8h-0.8zM588 422h1.0v1.0h-1.0zM796 425h1.0v1.0h-1.0zM767 411h1.0v1.0h-1.0zM601 433h1.5v1.5h-1.5zM828 439h1.2v1.2h-1.2zM761 403h1.5v1.5h-1.5zM596 440h1.2v1.2h-1.2zM610 412h1.3v1.3h-1.3zM825 395h1.2v1.2h-1.2zM983 392h1.2v1.2h-1.2zM913 433h1.4v1.4h-1.4zM941 485h1.0v1.0h-1.0zM865 375h1.0v1.0h-1.0zM577 442h1.3v1.3h-1.3zM690 440h1.3v1.3h-1.3zM685 392h1.5v1.5h-1.5zM823 460h0.8v0.8h-0.8zM482 441h1.2v1.2h-1.2zM722 508h0.9v0.9h-0.9zM1042 413h1.2v1.2h-1.2zM810 413h0.9v0.9h-0.9zM731 450h1.1v1.1h-1.1zM530 408h1.0v1.0h-1.0zM665 431h1.5v1.5h-1.5zM854 466h0.9v0.9h-0.9zM581 373h1.4v1.4h-1.4zM1008 455h1.1v1.1h-1.1zM905 539h0.8v0.8h-0.8zM905 438h1.2v1.2h-1.2zM758 429h1.0v1.0h-1.0zM871 427h1.1v1.1h-1.1zM679 478h0.9v0.9h-0.9zM795 378h1.0v1.0h-1.0zM753 488h1.0v1.0h-1.0zM605 466h1.6v1.6h-1.6zM703 433h1.1v1.1h-1.1zM707 429h1.1v1.1h-1.1zM583 369h1.3v1.3h-1.3zM979 412h1.1v1.1h-1.1zM901 409h1.4v1.4h-1.4zM812 474h0.9v0.9h-0.9zM612 433h1.0v1.0h-1.0zM825 482h1.0v1.0h-1.0zM537 372h1.0v1.0h-1.0zM685 450h1.4v1.4h-1.4zM624 463h0.8v0.8h-0.8zM844 467h1.1v1.1h-1.1zM1125 412h1.0v1.0h-1.0zM664 457h1.5v1.5h-1.5zM478 490h1.4v1.4h-1.4zM804 436h1.1v1.1h-1.1zM679 451h1.5v1.5h-1.5zM557 498h1.2v1.2h-1.2zM1005 453h1.0v1.0h-1.0zM904 446h1.3v1.3h-1.3zM981 447h1.1v1.1h-1.1zM625 434h1.4v1.4h-1.4zM733 501h1.3v1.3h-1.3z" fill="#c0c8ff" opacity="0.45"/><path d="M563 353h1.0v1.0h-1.0zM1199 415h1.1v1.1h-1.1zM1371 359h1.0v1.0h-1.0zM785 356h0.8v0.8h-0.8zM425 485h1.2v1.2h-1.2zM1307 592h1.0v1.0h-1.0zM1151 575h1.0v1.0h-1.0zM1172 496h1.5v1.5h-1.5zM1374 362h1.2v1.2h-1.2zM498 422h1.1v1.1h-1.1zM465 408h1.0v1.0h-1.0zM956 376h0.9v0.9h-0.9zM850 437h0.9v0.9h-0.9zM1145 364h0.9v0.9h-0.9zM782 420h0.9v0.9h-0.9zM1052 507h1.2v1.2h-1.2zM1185 296h1.1v1.1h-1.1zM807 309h1.1v1.1h-1.1zM458 443h1.2v1.2h-1.2zM925 390h1.0v1.0h-1.0zM423 397h1.4v1.4h-1.4zM1033 370h1.3v1.3h-1.3zM606 435h1.2v1.2h-1.2zM1471 402h1.2v1.2h-1.2zM1457 529h1.2v1.2h-1.2zM1095 417h1.1v1.1h-1.1zM708 547h1.4v1.4h-1.4zM827 572h0.8v0.8h-0.8zM550 447h1.0v1.0h-1.0zM802 593h0.9v0.9h-0.9zM614 360h1.3v1.3h-1.3zM661 289h1.2v1.2h-1.2zM840 363h1.1v1.1h-1.1zM1128 459h1.2v1.2h-1.2zM1028 547h1.5v1.5h-1.5zM772 397h1.4v1.4h-1.4zM750 512h1.3v1.3h-1.3zM1169 589h1.4v1.4h-1.4zM576 482h1.1v1.1h-1.1zM1031 404h1.0v1.0h-1.0zM1240 455h1.0v1.0h-1.0zM677 390h0.9v0.9h-0.9zM975 328h0.8v0.8h-0.8zM474 321h1.3v1.3h-1.3zM524 429h1.3v1.3h-1.3zM938 340h1.4v1.4h-1.4zM1376 306h1.0v1.0h-1.0zM968 537h1.1v1.1h-1.1zM1202 367h1.3v1.3h-1.3zM765 393h1.3v1.3h-1.3zM1345 547h1.2v1.2h-1.2zM870 509h1.2v1.2h-1.2zM1332 538h0.9v0.9h-0.9zM821 497h1.0v1.0h-1.0zM605 293h1.2v1.2h-1.2zM1456 591h0.9v0.9h-0.9zM1171 419h1.2v1.2h-1.2zM843 579h1.5v1.5h-1.5zM452 511h0.9v0.9h-0.9zM445 378h1.3v1.3h-1.3zM1515 326h1.0v1.0h-1.0zM427 458h1.1v1.1h-1.1zM817 385h1.4v1.4h-1.4zM1341 377h1.1v1.1h-1.1zM1092 527h1.5v1.5h-1.5zM835 505h1.2v1.2h-1.2zM1297 335h0.9v0.9h-0.9zM518 579h1.0v1.0h-1.0zM946 326h1.0v1.0h-1.0zM419 465h0.9v0.9h-0.9zM1100 374h1.0v1.0h-1.0zM939 403h1.0v1.0h-1.0zM455 309h1.4v1.4h-1.4zM745 313h0.9v0.9h-0.9zM941 599h0.9v0.9h-0.9zM1373 440h1.1v1.1h-1.1zM1305 412h0.8v0.8h-0.8zM1016 493h1.2v1.2h-1.2zM709 581h1.4v1.4h-1.4zM1516 427h1.4v1.4h-1.4zM1213 344h0.8v0.8h-0.8zM587 326h0.9v0.9h-0.9zM801 523h1.0v1.0h-1.0zM976 292h0.9v0.9h-0.9zM1476 292h1.2v1.2h-1.2zM1308 535h1.3v1.3h-1.3zM846 539h1.4v1.4h-1.4zM1261 596h0.9v0.9h-0.9zM1466 414h1.3v1.3h-1.3zM679 572h0.8v0.8h-0.8z" fill="#7a70d0" opacity="0.3"/><path d="M554 426h1.3v1.3h-1.3zM547 443h1.6v1.6h-1.6zM548 443h1.3v1.3h-1.3zM558 456h1.3v1.3h-1.3zM578 436h1.6v1.6h-1.6zM572 449h1.4v1.4h-1.4zM560 423h1.1v1.1h-1.1zM575 439h1.3v1.3h-1.3zM586 431h1.3v1.3h-1.3zM555 443h1.8v1.8h-1.8zM575 454h1.3v1.3h-1.3zM565 424h1.8v1.8h-1.8zM523 443h1.2v1.2h-1.2zM541 440h1.1v1.1h-1.1zM561 448h1.8v1.8h-1.8zM560 437h1.3v1.3h-1.3zM575 430h1.5v1.5h-1.5zM546 442h1.2v1.2h-1.2zM537 413h1.7v1.7h-1.7zM550 420h1.5v1.5h-1.5zM591 445h1.6v1.6h-1.6zM540 435h1.3v1.3h-1.3zM555 436h1.5v1.5h-1.5zM546 424h1.0v1.0h-1.0zM551 421h1.5v1.5h-1.5zM530 414h1.1v1.1h-1.1zM509 437h1.6v1.6h-1.6zM554 448h1.8v1.8h-1.8zM535 444h1.1v1.1h-1.1zM586 429h1.2v1.2h-1.2zM579 415h1.8v1.8h-1.8zM580 411h1.4v1.4h-1.4zM572 430h1.7v1.7h-1.7zM562 421h1.6v1.6h-1.6zM544 434h1.7v1.7h-1.7zM570 439h1.5v1.5h-1.5zM586 437h1.6v1.6h-1.6zM552 431h1.6v1.6h-1.6zM584 414h1.4v1.4h-1.4zM592 418h1.1v1.1h-1.1zM559 434h1.0v1.0h-1.0zM545 450h1.7v1.7h-1.7zM573 435h1.3v1.3h-1.3zM580 416h1.7v1.7h-1.7zM613 446h1.2v1.2h-1.2zM540 412h1.6v1.6h-1.6zM574 447h1.3v1.3h-1.3zM581 431h1.3v1.3h-1.3zM555 423h1.5v1.5h-1.5zM561 423h1.1v1.1h-1.1zM558 417h1.1v1.1h-1.1zM597 449h1.5v1.5h-1.5zM558 436h1.8v1.8h-1.8zM554 412h1.3v1.3h-1.3zM558 441h1.1v1.1h-1.1zM552 421h1.7v1.7h-1.7zM548 437h1.4v1.4h-1.4zM580 426h1.6v1.6h-1.6zM567 446h1.2v1.2h-1.2zM575 423h1.7v1.7h-1.7zM556 418h1.7v1.7h-1.7zM542 443h1.5v1.5h-1.5zM559 431h1.3v1.3h-1.3zM561 443h1.8v1.8h-1.8zM558 448h1.5v1.5h-1.5zM566 442h1.1v1.1h-1.1zM576 424h1.3v1.3h-1.3zM547 449h1.7v1.7h-1.7zM546 422h1.1v1.1h-1.1zM571 427h1.3v1.3h-1.3z" fill="#d8c0ff" opacity="0.5"/><path d="M1069 573h1.7v1.7h-1.7zM988 485h1.4v1.4h-1.4zM989 554h1.2v1.2h-1.2zM1031 541h1.1v1.1h-1.1zM999 551h1.2v1.2h-1.2zM1023 557h1.4v1.4h-1.4zM935 537h1.6v1.6h-1.6zM867 535h1.1v1.1h-1.1zM1014 555h1.2v1.2h-1.2zM1019 488h1.4v1.4h-1.4zM1039 564h1.5v1.5h-1.5zM981 588h1.8v1.8h-1.8zM931 554h1.7v1.7h-1.7zM972 549h1.8v1.8h-1.8zM1023 544h1.6v1.6h-1.6zM994 550h1.1v1.1h-1.1zM1056 581h1.2v1.2h-1.2zM1052 547h1.6v1.6h-1.6zM923 545h1.4v1.4h-1.4zM1014 549h1.2v1.2h-1.2zM1055 550h1.5v1.5h-1.5zM964 566h1.5v1.5h-1.5zM987 566h1.7v1.7h-1.7zM956 532h1.4v1.4h-1.4zM958 551h1.7v1.7h-1.7zM1025 603h1.7v1.7h-1.7zM1036 535h1.4v1.4h-1.4zM1059 543h1.1v1.1h-1.1zM1003 527h1.5v1.5h-1.5zM1090 596h1.2v1.2h-1.2zM1085 567h1.3v1.3h-1.3zM944 534h1.7v1.7h-1.7zM952 543h1.0v1.0h-1.0zM963 545h1.5v1.5h-1.5zM965 524h1.1v1.1h-1.1zM941 545h1.5v1.5h-1.5zM1058 541h1.4v1.4h-1.4zM1103 568h1.2v1.2h-1.2zM1061 506h1.2v1.2h-1.2zM1068 528h1.3v1.3h-1.3zM874 524h1.4v1.4h-1.4zM961 547h1.7v1.7h-1.7zM955 545h1.2v1.2h-1.2zM1035 591h1.6v1.6h-1.6zM1143 538h1.5v1.5h-1.5zM1038 507h1.6v1.6h-1.6zM1022 530h1.7v1.7h-1.7zM995 563h1.7v1.7h-1.7zM1081 549h1.3v1.3h-1.3zM1031 512h1.7v1.7h-1.7zM1089 530h1.1v1.1h-1.1zM996 535h1.8v1.8h-1.8zM1046 529h1.1v1.1h-1.1zM975 505h1.8v1.8h-1.8zM988 536h1.6v1.6h-1.6zM1123 563h1.6v1.6h-1.6zM1037 495h1.5v1.5h-1.5zM1090 533h1.4v1.4h-1.4zM968 560h1.0v1.0h-1.0zM1067 583h1.2v1.2h-1.2zM951 509h1.6v1.6h-1.6zM958 543h1.2v1.2h-1.2zM1043 578h1.5v1.5h-1.5zM1060 537h1.7v1.7h-1.7zM1052 534h1.8v1.8h-1.8zM897 501h1.6v1.6h-1.6zM986 563h1.4v1.4h-1.4zM994 546h1.7v1.7h-1.7zM944 539h1.6v1.6h-1.6zM1010 562h1.5v1.5h-1.5zM1013 567h1.1v1.1h-1.1zM1063 553h1.4v1.4h-1.4zM1091 534h1.3v1.3h-1.3zM973 555h1.4v1.4h-1.4zM1040 542h1.3v1.3h-1.3zM970 506h1.4v1.4h-1.4zM921 499h1.7v1.7h-1.7zM1009 576h1.8v1.8h-1.8zM972 542h1.6v1.6h-1.6zM1042 550h1.4v1.4h-1.4z" fill="#6a8cff" opacity="0.5"/><g mask="url(#rdm)"><rect x="1300" y="289" width="230" height="500" fill="url(#rdark)"/></g><circle cx="489" cy="373" r="60.500" fill="url(#pl1)"/><g mask="url(#bandm)"><rect x="397" y="350" width="1125" height="90" fill="url(#bandv)"/></g><g mask="url(#plm)"><circle cx="1306" cy="459" r="235" fill="url(#pl2)"/></g><g clip-path="url(#pc2)"><g filter="url(#bl8)" opacity=".6"><ellipse cx="1150" cy="325" rx="30" ry="52" fill="#fff" transform="rotate(26 1150 325)"/><ellipse cx="1108" cy="415" rx="14" ry="48" fill="#ffd0ff" transform="rotate(8 1108 415)"/></g><g filter="url(#bl3)" opacity=".55" fill="#1a1e8c"><ellipse cx="1178" cy="352" rx="9" ry="30" transform="rotate(28 1178 352)"/><ellipse cx="1150" cy="392" rx="8" ry="24" transform="rotate(20 1150 392)"/><ellipse cx="1200" cy="312" rx="10" ry="22" transform="rotate(38 1200 312)"/><ellipse cx="1135" cy="445" rx="12" ry="30" transform="rotate(6 1135 445)"/><ellipse cx="1165" cy="470" rx="16" ry="30" transform="rotate(-8 1165 470)"/><ellipse cx="1128" cy="352" rx="6" ry="18" transform="rotate(30 1128 352)"/><ellipse cx="1215" cy="390" rx="16" ry="40" transform="rotate(16 1215 390)"/></g><g filter="url(#bl3)" opacity=".5" fill="#f4c8ff"><ellipse cx="1162" cy="318" rx="7" ry="20" transform="rotate(30 1162 318)"/><ellipse cx="1136" cy="372" rx="6" ry="18" transform="rotate(22 1136 372)"/><ellipse cx="1186" cy="300" rx="6" ry="14" transform="rotate(40 1186 300)"/></g></g><g mask="url(#rimm)"><circle cx="1306" cy="459" r="246" fill="url(#pl2rim)"/></g><path d="M1150 283A235 235 0 0 0 1073 430A235 235 0 0 0 1086 540" fill="none" stroke="#f4c4ee" stroke-width="1.800" opacity=".75" filter="url(#bl1)"/><path d="M1466 335h1.5v1.5h-1.5zM1464 349h1.8v1.8h-1.8zM1471 314h1.4v1.4h-1.4zM1479 340h1.5v1.5h-1.5zM1521 309h1.7v1.7h-1.7zM1505 310h1.4v1.4h-1.4zM1464 329h1.2v1.2h-1.2zM1513 309h1.3v1.3h-1.3zM1511 327h1.6v1.6h-1.6zM1509 317h1.5v1.5h-1.5zM1494 350h1.6v1.6h-1.6zM1497 299h1.4v1.4h-1.4zM1519 313h1.4v1.4h-1.4zM1483 308h1.6v1.6h-1.6zM1485 335h1.1v1.1h-1.1zM1483 305h1.1v1.1h-1.1zM1473 309h1.6v1.6h-1.6zM1496 333h1.0v1.0h-1.0zM1501 334h1.4v1.4h-1.4zM1446 321h1.1v1.1h-1.1zM1504 300h1.8v1.8h-1.8zM1469 306h1.5v1.5h-1.5zM1492 312h1.1v1.1h-1.1zM1491 298h1.4v1.4h-1.4zM1507 312h1.2v1.2h-1.2zM1500 304h1.3v1.3h-1.3zM1513 318h1.1v1.1h-1.1zM1515 300h1.4v1.4h-1.4zM1439 310h1.3v1.3h-1.3zM1482 344h1.2v1.2h-1.2zM1476 327h1.4v1.4h-1.4zM1478 328h1.4v1.4h-1.4zM1470 303h1.2v1.2h-1.2zM1515 322h1.3v1.3h-1.3zM1476 312h1.6v1.6h-1.6zM1492 310h1.3v1.3h-1.3zM1498 309h1.5v1.5h-1.5zM1519 305h1.5v1.5h-1.5zM1480 324h1.5v1.5h-1.5zM1476 300h1.4v1.4h-1.4zM1452 306h1.0v1.0h-1.0zM1512 319h1.2v1.2h-1.2zM1512 293h1.2v1.2h-1.2zM1490 302h1.8v1.8h-1.8zM1506 293h1.3v1.3h-1.3z" fill="#c070e0" opacity="0.6"/><path d="M1483 464h1.6v1.6h-1.6zM1421 456h1.5v1.5h-1.5zM1491 447h1.0v1.0h-1.0zM1487 451h1.5v1.5h-1.5zM1440 478h1.3v1.3h-1.3zM1458 474h1.1v1.1h-1.1zM1468 492h1.1v1.1h-1.1zM1470 451h1.1v1.1h-1.1zM1510 477h1.8v1.8h-1.8zM1423 455h1.2v1.2h-1.2zM1456 478h1.7v1.7h-1.7zM1482 469h1.3v1.3h-1.3zM1456 485h1.7v1.7h-1.7zM1441 469h1.3v1.3h-1.3zM1493 461h1.6v1.6h-1.6zM1511 486h1.2v1.2h-1.2zM1479 476h1.3v1.3h-1.3zM1457 457h1.3v1.3h-1.3zM1435 454h1.3v1.3h-1.3zM1458 459h1.8v1.8h-1.8zM1467 490h1.2v1.2h-1.2zM1486 494h1.5v1.5h-1.5zM1489 474h1.7v1.7h-1.7zM1453 486h1.3v1.3h-1.3zM1460 454h1.8v1.8h-1.8zM1520 459h1.4v1.4h-1.4zM1496 495h1.1v1.1h-1.1zM1468 497h1.0v1.0h-1.0zM1477 448h1.4v1.4h-1.4zM1481 476h1.8v1.8h-1.8z" fill="#b060d8" opacity="0.5"/><path d="M1298 528h1.1v1.1h-1.1zM1297 573h1.1v1.1h-1.1zM1223 588h1.1v1.1h-1.1zM1296 547h1.5v1.5h-1.5zM1358 572h1.2v1.2h-1.2zM1366 581h1.2v1.2h-1.2zM1340 550h1.2v1.2h-1.2zM1290 608h1.3v1.3h-1.3zM1289 633h1.2v1.2h-1.2zM1329 634h1.2v1.2h-1.2zM1281 631h1.3v1.3h-1.3zM1311 583h1.5v1.5h-1.5zM1332 557h1.3v1.3h-1.3zM1284 551h1.4v1.4h-1.4zM1366 566h1.2v1.2h-1.2zM1401 631h1.2v1.2h-1.2zM1298 572h1.3v1.3h-1.3zM1234 647h1.6v1.6h-1.6zM1225 598h1.2v1.2h-1.2zM1304 697h1.1v1.1h-1.1zM1358 579h1.0v1.0h-1.0zM1309 589h1.3v1.3h-1.3zM1399 682h1.2v1.2h-1.2zM1302 590h1.4v1.4h-1.4zM1301 604h1.3v1.3h-1.3zM1366 593h1.5v1.5h-1.5zM1303 553h1.0v1.0h-1.0zM1259 596h1.3v1.3h-1.3zM1254 637h1.1v1.1h-1.1zM1276 560h1.3v1.3h-1.3zM1341 622h1.3v1.3h-1.3zM1353 591h1.1v1.1h-1.1zM1276 634h1.4v1.4h-1.4zM1417 559h1.6v1.6h-1.6zM1378 564h1.6v1.6h-1.6zM1348 606h1.4v1.4h-1.4zM1263 549h1.4v1.4h-1.4zM1309 593h1.3v1.3h-1.3zM1302 597h1.1v1.1h-1.1zM1375 526h1.0v1.0h-1.0z" fill="#9a60d0" opacity="0.4"/><path d="M1466 555h1.3v1.3h-1.3zM1483 527h1.0v1.0h-1.0zM1457 620h1.2v1.2h-1.2zM1477 653h1.3v1.3h-1.3zM1457 652h1.3v1.3h-1.3zM1486 682h1.1v1.1h-1.1zM1493 625h1.3v1.3h-1.3zM1486 565h1.1v1.1h-1.1zM1467 574h1.3v1.3h-1.3zM1478 682h1.1v1.1h-1.1zM1483 634h1.2v1.2h-1.2zM1473 541h1.5v1.5h-1.5zM1468 596h1.5v1.5h-1.5zM1481 628h1.2v1.2h-1.2zM1509 598h1.2v1.2h-1.2zM1468 614h1.5v1.5h-1.5zM1485 564h1.5v1.5h-1.5zM1462 623h1.4v1.4h-1.4zM1478 555h1.5v1.5h-1.5zM1515 604h1.2v1.2h-1.2zM1493 621h1.5v1.5h-1.5zM1442 677h1.1v1.1h-1.1zM1464 506h1.1v1.1h-1.1z" fill="#8a58c8" opacity="0.35"/><rect x="1072" y="376" width="450" height="36" fill="url(#bandv)" opacity=".0"/><g filter="url(#bl3)"><rect x="1075" y="389" width="447" height="9" fill="#2a58ff" opacity=".75"/><rect x="560" y="391" width="340" height="6" fill="#2a58ff" opacity=".4"/></g><ellipse cx="942" cy="394" rx="330" ry="12" fill="url(#flare2)"/><ellipse cx="942" cy="394" rx="98" ry="44" fill="url(#flare)"/><ellipse cx="942" cy="394" rx="46" ry="9" fill="#fff" filter="url(#bl3)"/><g filter="url(#bl3)"><rect x="800" y="567" width="300" height="5" fill="#2048ff" opacity=".55"/><ellipse cx="1020" cy="566" rx="26" ry="6" fill="#58a0ff" opacity=".8"/><path d="M1159 642L1228 716L1246 712Q1204 684 1192 642Z" fill="#2838e0" opacity=".7"/></g><path d="M1159 642L1240 730L1290 720Q1230 690 1215 642Z" fill="#141a90" opacity=".55" filter="url(#bl8)"/><path d="M397.0 731H1522.0" stroke="#b4b2c0" stroke-opacity=".66" stroke-width="2"/><path d="M397.0 641.5H1522.0" stroke="#b4b2c0" stroke-opacity=".66" stroke-width="2"/><path d="M397.0 570H1471.6" stroke="#b4b2c0" stroke-opacity=".66" stroke-width="2"/><path d="M437.5 515.3H1292.6" stroke="#b4b2c0" stroke-opacity=".66" stroke-width="2"/><path d="M654.4 473H1154.2" stroke="#b4b2c0" stroke-opacity=".66" stroke-width="2"/><path d="M792.8 446H1065.8" stroke="#b4b2c0" stroke-opacity=".66" stroke-width="2"/><path d="M883.6 428.3H1007.9" stroke="#b4b2c0" stroke-opacity=".66" stroke-width="2"/><path d="M933.3 418.6H976.2" stroke="#b4b2c0" stroke-opacity=".66" stroke-width="2"/><path d="M954.9 414.4H962.4" stroke="#b4b2c0" stroke-opacity=".66" stroke-width="2"/><path d="M959.5 413.5L-963.5 788.500M959.5 413.5L-513.5 788.500M959.5 413.5L-63.5 788.500M959.5 413.5L386.5 788.500M959.5 413.5L836.5 788.500M959.5 413.5L1286.5 788.500M959.5 413.5L1736.5 788.500M959.5 413.5L2186.5 788.500" stroke="#ececf2" stroke-width="1.300" fill="none"/><path d="M368.9 800.0L474.4 731.0L855.4 731.0L908.2 570.0L1096.0 570.0L963.9 418.6L976.2 418.6L1065.8 446.0L1026.8 446.0L1431.9 641.5L1158.3 641.5L1296.5 800.0Z" fill="#fff"/><path d="M909.800 746.200L959.600 711.700L1007.400 746.200Z" fill="#000"/><text x="446.600" y="341.800" font-family="Liberation Sans, sans-serif" font-size="23.500" fill="#ececf4" textLength="102.700" lengthAdjust="spacingAndGlyphs" style="font-kerning:none">Score: 10</text></svg></div>
</body></html>
